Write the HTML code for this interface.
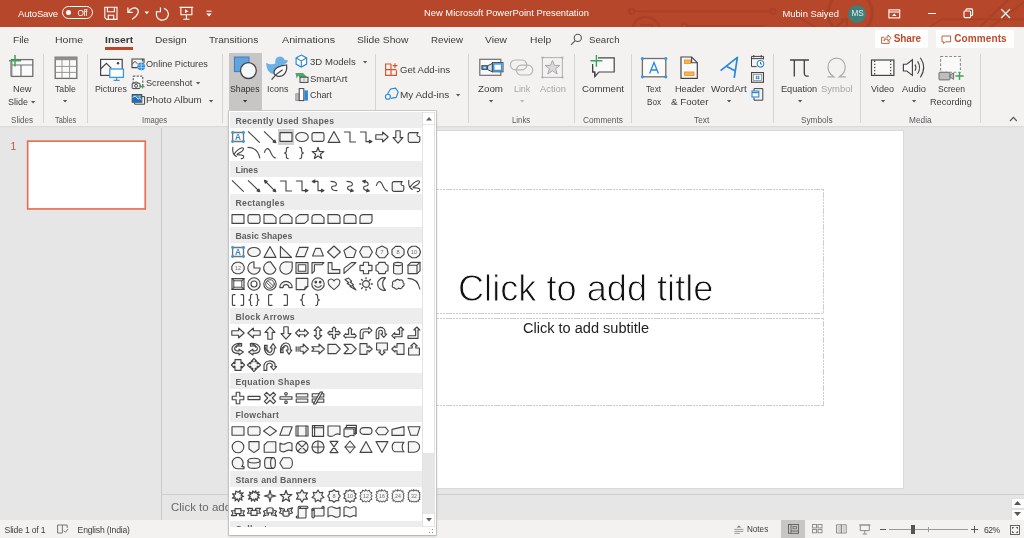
<!DOCTYPE html>
<html lang="en"><head><meta charset="utf-8"><title>New Microsoft PowerPoint Presentation - PowerPoint</title>
<style>
html,body{margin:0;padding:0;background:#E6E6E6}
body{width:1024px;height:538px;position:relative;overflow:hidden;font-family:"Liberation Sans",Arial,sans-serif}
#app{position:absolute;left:0;top:0;width:1024px;height:538px;overflow:hidden;will-change:transform}
#app div,#app span,#app svg{position:absolute;display:block}
.t{white-space:pre;margin:0;padding:0}
svg{overflow:visible}
.sh{fill:#F6F6F6;stroke:#444;stroke-width:1.12;stroke-linejoin:round;stroke-linecap:round}
.sh .n{fill:none}
.sh .k{fill:#4A4A4A}
.sh .t{stroke-width:1.3}
.sh .b{stroke:#2B88D8;fill:none}
.sh text{stroke:none;fill:#4A4A4A;font-family:"Liberation Sans",sans-serif}
</style></head><body><div id="app">
<div style="left:0px;top:0px;width:1024px;height:538px;background:#E6E6E6;"></div>
<div style="left:0px;top:0px;width:1024px;height:26.6px;background:#B7472A;"></div>
<svg style="left:600px;top:0;overflow:hidden" width="424" height="26.600" viewBox="0 0 424 26.600"><g fill="none" stroke="#A84126" stroke-width="1.800"><circle cx="31.600" cy="11.300" r="2.700"/><path d="M34.400 11.300H170.200"/><circle cx="173" cy="11.300" r="2.700"/><circle cx="46" cy="31" r="14" stroke-width="2.400"/><path d="M40 24.600h12v5" /><circle cx="84.200" cy="26" r="2.600"/><path d="M87 25.800H165.500"/><path d="M194 14.500l22 13"/><circle cx="250.200" cy="13" r="22" stroke-width="3"/><path d="M236 27l10-8M241 19.600h6v6" stroke-width="2.400"/><path d="M329 27.500l12.500-8.200H424M380 27l28-27M391 27l33-25"/></g></svg>
<div style="left:0px;top:26.6px;width:1024px;height:99.2px;background:#F3F2F1;"></div>
<div style="left:0;top:125.800px;width:1024px;height:2.600px;background:linear-gradient(#D8D8D8,#E6E6E6)"></div>
<span class="t" style="left:18.00px;top:6.70px;font-size:9.6px;line-height:13px;color:#fff;letter-spacing:-0.204px;">AutoSave</span>
<div style="left:62px;top:6.4px;width:28.600px;height:11px;border:1px solid #fff;border-radius:7px"></div>
<div style="left:65.600px;top:10.400px;width:5px;height:5px;border-radius:3px;background:#fff"></div>
<span class="t" style="left:77.40px;top:7.50px;font-size:8.2px;line-height:11px;color:#fff;letter-spacing:-0.262px;">Off</span>
<svg style="left:104px;top:6px;" width="14" height="15" viewBox="0 0 14 15"><g fill="none" stroke="#fff" stroke-width="1.1"><path d="M.8 1.2h12.2v12.2H2.6L.8 11.6z"/><path d="M3.4 1.4v4.4h7V1.4M4.3 13.2V9.3h5.4v3.9"/></g></svg>
<svg style="left:127px;top:5px;" width="16" height="16" viewBox="0 0 16 16"><g fill="none" stroke="#fff" stroke-width="1.15"><path d="M.9 2.600v4.800h4.800"/><path d="M1.200 7.200C3.400 3.400 7.400 1.600 10 3.800c2.600 2.200 1.600 6-5 10.600"/></g></svg>
<svg style="left:144px;top:11px;" width="6" height="4" viewBox="0 0 6 4"><path d="M.5.6h4.6L2.8 3.2z" fill="#fff"/></svg>
<svg style="left:155px;top:5px;" width="16" height="16" viewBox="0 0 16 16"><g fill="none" stroke="#fff" stroke-width="1.15"><path d="M5.400 2.400v4.300H.8"/><path d="M8.900 3.400A6 6 0 1 1 1.700 7"/></g></svg>
<svg style="left:179px;top:6px;" width="15" height="15" viewBox="0 0 15 15"><g fill="none" stroke="#fff" stroke-width="1.1"><path d="M.6 1.4h13.6M1.9 1.6v7.2h11V1.6M7.4 8.9v4M4.3 13.2h6.2"/></g><path d="M6 3.2l3.4 2-3.4 2z" fill="#fff"/></svg>
<svg style="left:205px;top:10px;" width="8" height="8" viewBox="0 0 8 8"><path d="M1.5 1.2h5" stroke="#fff" stroke-width="1"/><path d="M1.2 3.6h5.6L4 6.6z" fill="#fff"/></svg>
<span class="t" style="left:424.00px;top:6.10px;font-size:9.4px;line-height:13px;color:#fff;letter-spacing:-0.006px;">New Microsoft PowerPoint Presentation</span>
<span class="t" style="left:782.50px;top:6.90px;font-size:9.4px;line-height:13px;color:#fff;letter-spacing:-0.038px;">Mubin Saiyed</span>
<div style="left:848px;top:4.5px;width:18px;height:18px;border-radius:9px;background:#3F7F7A"></div>
<span class="t" style="left:851.60px;top:8.10px;font-size:8.2px;line-height:11px;color:#E4EFEE;letter-spacing:-0.250px;">MS</span>
<svg style="left:888px;top:9px;" width="13" height="10" viewBox="0 0 13 10"><g fill="none" stroke="#fff" stroke-width="1.1"><rect x=".9" y=".9" width="10.8" height="8"/><path d="M1 3h10.6"/></g><path d="M4 6.9l2.3-2.4 2.3 2.4z" fill="#fff"/></svg>
<div style="left:927.6px;top:13.2px;width:8.4px;height:1.1px;background:#fff;"></div>
<svg style="left:963px;top:8px;" width="11" height="11" viewBox="0 0 11 11"><g fill="none" stroke="#fff" stroke-width="1.1"><rect x="1" y="3" width="6.6" height="6.6" rx="1"/><path d="M3 2.9V1.9a1 1 0 0 1 1-1h4.6a1 1 0 0 1 1 1v4.6a1 1 0 0 1-1 1H7.7"/></g></svg>
<svg style="left:1000px;top:8px;" width="11" height="11" viewBox="0 0 11 11"><path d="M1.2 1.2l8.8 8.8M10 1.2L1.2 10" stroke="#fff" stroke-width="1.2" fill="none"/></svg>
<span class="t" style="left:13.00px;top:32.80px;font-size:9.7px;line-height:14px;color:#3C3C3C;letter-spacing:0.000px;transform:scaleX(1.0365);transform-origin:0 0;">File</span>
<span class="t" style="left:54.50px;top:32.80px;font-size:9.7px;line-height:14px;color:#3C3C3C;letter-spacing:0.000px;transform:scaleX(1.0860);transform-origin:0 0;">Home</span>
<span class="t" style="left:154.50px;top:32.80px;font-size:9.7px;line-height:14px;color:#3C3C3C;letter-spacing:0.000px;transform:scaleX(1.0499);transform-origin:0 0;">Design</span>
<span class="t" style="left:209.00px;top:32.80px;font-size:9.7px;line-height:14px;color:#3C3C3C;letter-spacing:0.000px;transform:scaleX(1.0472);transform-origin:0 0;">Transitions</span>
<span class="t" style="left:281.50px;top:32.80px;font-size:9.7px;line-height:14px;color:#3C3C3C;letter-spacing:0.000px;transform:scaleX(1.1066);transform-origin:0 0;">Animations</span>
<span class="t" style="left:357.00px;top:32.80px;font-size:9.7px;line-height:14px;color:#3C3C3C;letter-spacing:0.000px;transform:scaleX(1.0633);transform-origin:0 0;">Slide Show</span>
<span class="t" style="left:431.00px;top:32.80px;font-size:9.7px;line-height:14px;color:#3C3C3C;letter-spacing:0.000px;transform:scaleX(1.0061);transform-origin:0 0;">Review</span>
<span class="t" style="left:485.00px;top:32.80px;font-size:9.7px;line-height:14px;color:#3C3C3C;letter-spacing:0.000px;transform:scaleX(1.0552);transform-origin:0 0;">View</span>
<span class="t" style="left:530.00px;top:32.80px;font-size:9.7px;line-height:14px;color:#3C3C3C;letter-spacing:0.000px;transform:scaleX(1.0627);transform-origin:0 0;">Help</span>
<span class="t" style="left:104.50px;top:32.80px;font-size:9.7px;line-height:14px;color:#383838;letter-spacing:0.000px;font-weight:bold;transform:scaleX(1.0714);transform-origin:0 0;">Insert</span>
<div style="left:104.6px;top:47.1px;width:28.5px;height:2.5px;background:#BC4526;"></div>
<svg style="left:570px;top:33px;" width="13" height="13" viewBox="0 0 13 13"><g fill="none" stroke="#555" stroke-width="1.1"><circle cx="7.8" cy="4.9" r="3.6"/><path d="M5.2 7.6L1 11.9"/></g></svg>
<span class="t" style="left:588.60px;top:32.80px;font-size:9.7px;line-height:14px;color:#3C3C3C;letter-spacing:0.000px;transform:scaleX(0.9956);transform-origin:0 0;">Search</span>
<div style="left:875.300px;top:29.800px;width:52.700px;height:18px;background:#fff;border-radius:1.5px"></div>
<svg style="left:880px;top:33.4px;" width="12" height="12" viewBox="0 0 12 12"><g fill="none" stroke="#C4573A" stroke-width=".95"><path d="M4.4 4.2H1.6v6.2h7.6V7.8"/><path d="M3.9 7.9C4.3 5.2 6 4 8 4V2l3 3.2-3 3.1V6.2C6.3 6.1 4.9 6.600 3.9 7.9z"/></g></svg>
<span class="t" style="left:893.80px;top:32.40px;font-size:10px;line-height:14px;color:#BE4B2C;letter-spacing:-0.159px;font-weight:bold;">Share</span>
<div style="left:935.800px;top:29.800px;width:78px;height:18px;background:#fff;border-radius:1.5px"></div>
<svg style="left:941px;top:34.6px;" width="11" height="11" viewBox="0 0 11 11"><path d="M1 1h8.600v5.800H4.400L2.600 8.600V6.800H1z" fill="none" stroke="#C4573A" stroke-width=".95"/></svg>
<span class="t" style="left:954.30px;top:32.40px;font-size:10px;line-height:14px;color:#BE4B2C;letter-spacing:0.091px;font-weight:bold;">Comments</span>
<div style="left:43.25px;top:54px;width:1px;height:69px;background:#D6D4D2;"></div>
<div style="left:87px;top:54px;width:1px;height:69px;background:#D6D4D2;"></div>
<div style="left:221.5px;top:54px;width:1px;height:69px;background:#D6D4D2;"></div>
<div style="left:375px;top:54px;width:1px;height:69px;background:#D6D4D2;"></div>
<div style="left:468.25px;top:54px;width:1px;height:69px;background:#D6D4D2;"></div>
<div style="left:573.75px;top:54px;width:1px;height:69px;background:#D6D4D2;"></div>
<div style="left:631.25px;top:54px;width:1px;height:69px;background:#D6D4D2;"></div>
<div style="left:772.9px;top:54px;width:1px;height:69px;background:#D6D4D2;"></div>
<div style="left:859.9px;top:54px;width:1px;height:69px;background:#D6D4D2;"></div>
<div style="left:979.9px;top:54px;width:1px;height:69px;background:#D6D4D2;"></div>
<span class="t" style="left:10.60px;top:113.80px;font-size:8.5px;line-height:12px;color:#5A5A5A;letter-spacing:0.000px;transform:scaleX(0.9503);transform-origin:0 0;">Slides</span>
<span class="t" style="left:54.60px;top:113.80px;font-size:8.5px;line-height:12px;color:#5A5A5A;letter-spacing:0.000px;transform:scaleX(0.8628);transform-origin:0 0;">Tables</span>
<span class="t" style="left:141.80px;top:113.80px;font-size:8.5px;line-height:12px;color:#5A5A5A;letter-spacing:0.000px;transform:scaleX(0.9041);transform-origin:0 0;">Images</span>
<span class="t" style="left:511.80px;top:113.80px;font-size:8.5px;line-height:12px;color:#5A5A5A;letter-spacing:0.000px;transform:scaleX(0.9172);transform-origin:0 0;">Links</span>
<span class="t" style="left:582.60px;top:113.80px;font-size:8.5px;line-height:12px;color:#5A5A5A;letter-spacing:0.000px;transform:scaleX(0.9685);transform-origin:0 0;">Comments</span>
<span class="t" style="left:694.20px;top:113.80px;font-size:8.5px;line-height:12px;color:#5A5A5A;letter-spacing:0.000px;transform:scaleX(0.9879);transform-origin:0 0;">Text</span>
<span class="t" style="left:800.60px;top:113.80px;font-size:8.5px;line-height:12px;color:#5A5A5A;letter-spacing:0.000px;transform:scaleX(0.9695);transform-origin:0 0;">Symbols</span>
<span class="t" style="left:909.00px;top:113.80px;font-size:8.5px;line-height:12px;color:#5A5A5A;letter-spacing:0.000px;transform:scaleX(0.9762);transform-origin:0 0;">Media</span>
<svg style="left:1009px;top:116px;" width="9" height="6" viewBox="0 0 9 6"><path d="M1 5l3.4-3.6L7.800 5" fill="none" stroke="#555" stroke-width="1.15"/></svg>
<span class="t" style="left:12.60px;top:82.80px;font-size:9.3px;line-height:13px;color:#3C3C3C;letter-spacing:0.000px;transform:scaleX(0.9890);transform-origin:0 0;">New</span>
<span class="t" style="left:8.00px;top:95.80px;font-size:9.3px;line-height:13px;color:#3C3C3C;letter-spacing:0.000px;transform:scaleX(0.9671);transform-origin:0 0;">Slide</span>
<svg style="left:31.1px;top:101.0px;" width="4.2" height="2.4" viewBox="0 0 4.2 2.4"><path d="M0 0h4.200L2.100 2.400z" fill="#555"/></svg>
<span class="t" style="left:55.00px;top:82.80px;font-size:9.3px;line-height:13px;color:#3C3C3C;letter-spacing:0.000px;transform:scaleX(0.9355);transform-origin:0 0;">Table</span>
<svg style="left:63.4px;top:100.39999999999999px;" width="4.2" height="2.4" viewBox="0 0 4.2 2.4"><path d="M0 0h4.200L2.100 2.400z" fill="#555"/></svg>
<span class="t" style="left:95.00px;top:82.80px;font-size:9.3px;line-height:13px;color:#3C3C3C;letter-spacing:0.000px;transform:scaleX(0.9466);transform-origin:0 0;">Pictures</span>
<span class="t" style="left:146.20px;top:58.20px;font-size:9.3px;line-height:13px;color:#3C3C3C;letter-spacing:0.000px;transform:scaleX(0.9800);transform-origin:0 0;">Online Pictures</span>
<span class="t" style="left:146.20px;top:76.50px;font-size:9.3px;line-height:13px;color:#3C3C3C;letter-spacing:0.000px;transform:scaleX(0.9842);transform-origin:0 0;">Screenshot</span>
<svg style="left:195.5px;top:81.6px;" width="4.2" height="2.4" viewBox="0 0 4.2 2.4"><path d="M0 0h4.200L2.100 2.400z" fill="#555"/></svg>
<span class="t" style="left:146.20px;top:94.30px;font-size:9.3px;line-height:13px;color:#3C3C3C;letter-spacing:0.000px;transform:scaleX(1.0581);transform-origin:0 0;">Photo Album</span>
<svg style="left:209.1px;top:100.0px;" width="4.2" height="2.4" viewBox="0 0 4.2 2.4"><path d="M0 0h4.200L2.100 2.400z" fill="#555"/></svg>
<div style="left:229px;top:53px;width:33px;height:58px;background:#C8C6C4;"></div>
<span class="t" style="left:230.40px;top:82.80px;font-size:9.3px;line-height:13px;color:#333;letter-spacing:0.000px;transform:scaleX(0.9384);transform-origin:0 0;">Shapes</span>
<svg style="left:243.4px;top:100.39999999999999px;" width="4.2" height="2.4" viewBox="0 0 4.2 2.4"><path d="M0 0h4.200L2.100 2.400z" fill="#333"/></svg>
<span class="t" style="left:266.80px;top:82.80px;font-size:9.3px;line-height:13px;color:#3C3C3C;letter-spacing:0.000px;transform:scaleX(0.9627);transform-origin:0 0;">Icons</span>
<span class="t" style="left:310.00px;top:56.20px;font-size:9.3px;line-height:13px;color:#3C3C3C;letter-spacing:0.000px;transform:scaleX(1.0303);transform-origin:0 0;">3D Models</span>
<svg style="left:362.9px;top:60.8px;" width="4.2" height="2.4" viewBox="0 0 4.2 2.4"><path d="M0 0h4.200L2.100 2.400z" fill="#555"/></svg>
<span class="t" style="left:310.00px;top:72.70px;font-size:9.3px;line-height:13px;color:#3C3C3C;letter-spacing:0.000px;transform:scaleX(1.0222);transform-origin:0 0;">SmartArt</span>
<span class="t" style="left:310.00px;top:88.50px;font-size:9.3px;line-height:13px;color:#3C3C3C;letter-spacing:0.000px;transform:scaleX(0.9586);transform-origin:0 0;">Chart</span>
<span class="t" style="left:399.60px;top:63.90px;font-size:9.3px;line-height:13px;color:#3C3C3C;letter-spacing:0.000px;transform:scaleX(1.0289);transform-origin:0 0;">Get Add-ins</span>
<span class="t" style="left:399.60px;top:88.90px;font-size:9.3px;line-height:13px;color:#3C3C3C;letter-spacing:0.000px;transform:scaleX(1.0695);transform-origin:0 0;">My Add-ins</span>
<svg style="left:455.5px;top:93.8px;" width="4.2" height="2.4" viewBox="0 0 4.2 2.4"><path d="M0 0h4.200L2.100 2.400z" fill="#555"/></svg>
<span class="t" style="left:478.00px;top:82.80px;font-size:9.3px;line-height:13px;color:#3C3C3C;letter-spacing:0.000px;transform:scaleX(1.0516);transform-origin:0 0;">Zoom</span>
<svg style="left:488.5px;top:100.39999999999999px;" width="4.2" height="2.4" viewBox="0 0 4.2 2.4"><path d="M0 0h4.200L2.100 2.400z" fill="#555"/></svg>
<span class="t" style="left:513.80px;top:82.80px;font-size:9.3px;line-height:13px;color:#A6A6A6;letter-spacing:0.000px;transform:scaleX(0.9496);transform-origin:0 0;">Link</span>
<svg style="left:519.6999999999999px;top:100.39999999999999px;" width="4.2" height="2.4" viewBox="0 0 4.2 2.4"><path d="M0 0h4.200L2.100 2.400z" fill="#B8B8B8"/></svg>
<span class="t" style="left:539.60px;top:82.80px;font-size:9.3px;line-height:13px;color:#A6A6A6;letter-spacing:0.000px;transform:scaleX(1.0059);transform-origin:0 0;">Action</span>
<span class="t" style="left:581.80px;top:82.80px;font-size:9.3px;line-height:13px;color:#3C3C3C;letter-spacing:0.000px;transform:scaleX(1.0419);transform-origin:0 0;">Comment</span>
<span class="t" style="left:646.40px;top:82.80px;font-size:9.3px;line-height:13px;color:#3C3C3C;letter-spacing:0.000px;transform:scaleX(0.8795);transform-origin:0 0;">Text</span>
<span class="t" style="left:647.00px;top:95.80px;font-size:9.3px;line-height:13px;color:#3C3C3C;letter-spacing:0.000px;transform:scaleX(0.8736);transform-origin:0 0;">Box</span>
<span class="t" style="left:674.60px;top:82.80px;font-size:9.3px;line-height:13px;color:#3C3C3C;letter-spacing:0.000px;transform:scaleX(0.9835);transform-origin:0 0;">Header</span>
<span class="t" style="left:670.80px;top:95.80px;font-size:9.3px;line-height:13px;color:#3C3C3C;letter-spacing:0.000px;transform:scaleX(1.0486);transform-origin:0 0;">&amp; Footer</span>
<span class="t" style="left:711.00px;top:82.80px;font-size:9.3px;line-height:13px;color:#3C3C3C;letter-spacing:0.000px;transform:scaleX(1.0549);transform-origin:0 0;">WordArt</span>
<svg style="left:726.9px;top:100.39999999999999px;" width="4.2" height="2.4" viewBox="0 0 4.2 2.4"><path d="M0 0h4.200L2.100 2.400z" fill="#555"/></svg>
<span class="t" style="left:781.40px;top:82.80px;font-size:9.3px;line-height:13px;color:#3C3C3C;letter-spacing:0.000px;transform:scaleX(0.9860);transform-origin:0 0;">Equation</span>
<svg style="left:797.6999999999999px;top:100.39999999999999px;" width="4.2" height="2.4" viewBox="0 0 4.2 2.4"><path d="M0 0h4.200L2.100 2.400z" fill="#555"/></svg>
<span class="t" style="left:821.20px;top:82.80px;font-size:9.3px;line-height:13px;color:#A6A6A6;letter-spacing:0.000px;transform:scaleX(1.0190);transform-origin:0 0;">Symbol</span>
<span class="t" style="left:871.00px;top:82.80px;font-size:9.3px;line-height:13px;color:#3C3C3C;letter-spacing:0.000px;transform:scaleX(0.9738);transform-origin:0 0;">Video</span>
<svg style="left:880.5px;top:100.39999999999999px;" width="4.2" height="2.4" viewBox="0 0 4.2 2.4"><path d="M0 0h4.200L2.100 2.400z" fill="#555"/></svg>
<span class="t" style="left:901.60px;top:82.80px;font-size:9.3px;line-height:13px;color:#3C3C3C;letter-spacing:0.000px;transform:scaleX(1.0090);transform-origin:0 0;">Audio</span>
<svg style="left:911.5px;top:100.39999999999999px;" width="4.2" height="2.4" viewBox="0 0 4.2 2.4"><path d="M0 0h4.200L2.100 2.400z" fill="#555"/></svg>
<span class="t" style="left:938.00px;top:82.80px;font-size:9.3px;line-height:13px;color:#3C3C3C;letter-spacing:0.000px;transform:scaleX(0.9163);transform-origin:0 0;">Screen</span>
<span class="t" style="left:930.40px;top:95.80px;font-size:9.3px;line-height:13px;color:#3C3C3C;letter-spacing:0.000px;transform:scaleX(0.9861);transform-origin:0 0;">Recording</span>
<svg style="left:8px;top:54px;" width="27" height="25" viewBox="0 0 27 25"><rect x="3.4" y="5.600" width="21.400" height="16.800" fill="#FAFAFA" stroke="#6E6E6E" stroke-width="1.3"/><path d="M3.400 11h21.400M13 11v11.400" stroke="#6E6E6E" stroke-width="1.2" fill="none"/><rect x="2.400" y="8" width="2" height="14" fill="#8A8A8A"/><path d="M1 6.800h12.200M7 1v11.600" stroke="#3DA35D" stroke-width="1.5" fill="none"/></svg>
<svg style="left:54px;top:56px;" width="24" height="24" viewBox="0 0 24 24"><rect x="1.200" y="1.200" width="21.600" height="21.200" fill="#FAFAFA" stroke="#6E6E6E" stroke-width="1.3"/><rect x="1.200" y="1.200" width="21.600" height="3" fill="#8E8E8E"/><path d="M8 4v18.400M15.600 4v18.400M1.200 10.400h21.600M1.200 16.400h21.600" stroke="#8C8C8C" stroke-width=".9" fill="none"/></svg>
<svg style="left:99px;top:57px;" width="27" height="25" viewBox="0 0 27 25"><rect x="1.600" y="2.400" width="21.600" height="16" fill="#FAFAFA" stroke="#444" stroke-width="1.2"/><path d="M1.600 12l5.800-5.600 5 5" stroke="#444" stroke-width="1.200" fill="none"/><circle cx="19" cy="6.300" r="1.200" fill="#444"/><rect x="10.800" y="12" width="13.600" height="8.400" fill="#fff" stroke="#3A96DD" stroke-width="1.300"/><path d="M17.600 20.400v2.600M14.600 23.300h6" stroke="#3A96DD" stroke-width="1.200" fill="none"/></svg>
<svg style="left:131px;top:58px;" width="15" height="13" viewBox="0 0 15 13"><path d="M8 9.600H1V1h12v4" fill="none" stroke="#444" stroke-width="1.100"/><path d="M1 6.400l3-3 2.400 2.400" fill="none" stroke="#444" stroke-width="1"/><path d="M11.400 1v2.400" stroke="#444" stroke-width="1"/><circle cx="10.300" cy="8.300" r="3.900" fill="#2B88D8"/><path d="M10.300 4.400v7.800M6.600 7h7.400M6.600 9.600h7.400" stroke="#BFE0F8" stroke-width=".7" fill="none"/></svg>
<svg style="left:131px;top:75px;" width="15" height="15" viewBox="0 0 15 15"><rect x="2.200" y="1.100" width="9.600" height="10" fill="#FAFAFA" stroke="#444" stroke-width="1" stroke-dasharray="2.200 1.300"/><rect x="1.200" y="8.200" width="7.800" height="5.400" rx=".8" fill="#F3F2F1" stroke="#444" stroke-width="1"/><path d="M3.400 8.200l.6-1.100h2.200l.6 1.100" fill="#F3F2F1" stroke="#444" stroke-width=".9"/><circle cx="5.100" cy="10.900" r="1.500" fill="none" stroke="#444" stroke-width=".9"/><path d="M9.600 11.600h4M11.600 9.600v4" stroke="#3DA35D" stroke-width="1.100"/></svg>
<svg style="left:131px;top:93px;" width="15" height="12" viewBox="0 0 15 12"><path d="M3.600 9.400v1.800h10V3.600H11" fill="none" stroke="#444" stroke-width="1"/><rect x="1.200" y="1.600" width="9.600" height="7.600" fill="#3A96DD" stroke="#444" stroke-width="1"/><path d="M1.600 5.200l2.600-1.800 3 3 1.400-1 2 1.600v2H1.600z" fill="#1F6FBF"/><path d="M1.600 4.400l2.600-1.400 3 3.200 1.400-1 2 1.600" fill="none" stroke="#fff" stroke-width=".7"/><circle cx="8.400" cy="3.400" r=".9" fill="#F5A33B"/></svg>
<svg style="left:233px;top:55px;" width="26" height="26" viewBox="0 0 26 26"><rect x="1.400" y="2" width="14.600" height="14.600" fill="#62A3DB" stroke="#3B7CC9" stroke-width="1"/><circle cx="15.400" cy="15.600" r="7.900" fill="#F5F8F9" stroke="#444" stroke-width="1.300"/></svg>
<svg style="left:265px;top:55px;" width="25" height="27" viewBox="0 0 25 27"><path d="M1.200 7.800C4 9.600 7.600 9.800 10.400 8.600C9.600 5 11.400 1.600 14.800 1.500C17.400 1.500 19 3 19.400 4.800L23 5.600C22.400 8 20.600 9 18.600 9.200C18.600 14 15 19 9 19C4 19 1.200 14 1.200 7.800z" fill="#6CB0E7"/><path d="M9.400 19.400C7.400 13.600 14 10.600 21.600 10c.8 6.600-2.600 12.600-9.400 11.200z" fill="#FAFAFA" stroke="#444" stroke-width="1.200"/><path d="M6.600 24.600C9.600 20.600 13 17.600 17.600 14.800" fill="none" stroke="#444" stroke-width="1.200"/></svg>
<svg style="left:295px;top:54px;" width="13" height="14" viewBox="0 0 13 14"><path d="M6.300 1.100l5.300 2.800v6.200l-5.300 3-5.200-3V3.900z" fill="#fff" stroke="#2B88D8" stroke-width="1.150"/><path d="M1.100 3.900l5.200 3 5.300-3M6.300 6.900v6.200" fill="none" stroke="#2B88D8" stroke-width="1.100"/></svg>
<svg style="left:295px;top:72px;" width="14" height="12" viewBox="0 0 14 12"><path d="M.6 1h7.400l4.200 4.200H4.600L3 3.600 1.600 5z" fill="#4CA86B"/><path d="M.6 1l2.600 2.600-1.600 3z" fill="#4CA86B"/><rect x="5" y="5.200" width="8" height="5.200" fill="#E9E9E9" stroke="#444" stroke-width="1"/><path d="M9 6.400v2.800" stroke="#888" stroke-width=".8"/></svg>
<svg style="left:295px;top:87px;" width="14" height="15" viewBox="0 0 14 15"><rect x=".8" y="6.800" width="3.400" height="6.800" fill="#BDBDBD" stroke="#8A8A8A" stroke-width=".8"/><rect x="4.200" y="1.600" width="4.600" height="12" fill="#fff" stroke="#444" stroke-width="1"/><rect x="9.300" y="3.400" width="3.600" height="10.200" fill="#2B88D8"/></svg>
<svg style="left:384px;top:62px;" width="14" height="15" viewBox="0 0 14 15"><path d="M7.200 2H1.600v11.400h10.800V8.400M1.600 7.600h10.800M7 2v11.400" fill="none" stroke="#D8532E" stroke-width="1.150"/><path d="M8.600 3.600h4.800M11 1.200V6" stroke="#D8532E" stroke-width="1.100"/></svg>
<svg style="left:384px;top:87px;" width="15" height="13" viewBox="0 0 15 13"><path d="M3.600 6.800l3-4.800 5-.8 2.600 3.800-2 5.400-5.200 1" fill="none" stroke="#2B88D8" stroke-width="1.150"/><circle cx="3.900" cy="9.700" r="2.500" fill="none" stroke="#2B88D8" stroke-width="1.150"/></svg>
<svg style="left:478px;top:57px;" width="27" height="21" viewBox="0 0 27 21"><rect x="1.800" y="2.300" width="21" height="16" fill="#FAFAFA" stroke="#6E6E6E" stroke-width="1.200"/><path d="M9.600 8.800l4.800-2.400v8.400l-4.800-2.200z" fill="#E0E0E0" stroke="#444" stroke-width="1"/><rect x="3.800" y="8.600" width="5.600" height="3.900" fill="#2B88D8" stroke="#444" stroke-width=".8"/><rect x="5.400" y="9.700" width="2.400" height="1.700" fill="#BFE0F8"/><rect x="14.400" y="5.600" width="10.600" height="9.200" fill="#fff" stroke="#444" stroke-width="1"/><rect x="15.700" y="6.900" width="8" height="6.600" fill="#fff" stroke="#2B9AF3" stroke-width="1.500"/></svg>
<svg style="left:509px;top:58px;" width="25" height="19" viewBox="0 0 25 19"><rect x="1.400" y="2" width="16.400" height="9.800" rx="4.900" fill="none" stroke="#B4B4B4" stroke-width="1.200"/><rect x="7.400" y="7.200" width="16.400" height="9.800" rx="4.900" fill="none" stroke="#B4B4B4" stroke-width="1.200"/></svg>
<svg style="left:540px;top:55px;" width="25" height="25" viewBox="0 0 25 25"><rect x="2.400" y="2.600" width="20" height="19.800" fill="none" stroke="#B0B0B0" stroke-width="1"/><path d="M12.500 5.400l2.100 5h5.200l-4.200 3.300 1.600 5.300-4.700-3.200-4.700 3.200 1.600-5.300-4.200-3.300h5.200z" fill="#DADADA" stroke="#A8A8A8" stroke-width="1"/><g fill="#B0B0B0"><rect x="1.400" y="1.600" width="2" height="2"/><rect x="21.400" y="1.600" width="2" height="2"/><rect x="1.400" y="21.400" width="2" height="2"/><rect x="21.400" y="21.400" width="2" height="2"/></g></svg>
<svg style="left:589px;top:54px;" width="27" height="25" viewBox="0 0 27 25"><path d="M3.600 3.800h21.600v14.200H9.800L5.800 22.600V18H3.600z" fill="#FAFAFA" stroke="#444" stroke-width="1.200"/><rect x="0" y="2" width="9" height="10" fill="#F3F2F1"/><path d="M3.600 10v8h2.200v4.600" fill="none" stroke="#444" stroke-width="1.200"/><path d="M1.400 6.800h12M7.400 1v11.700" stroke="#3DA35D" stroke-width="1.400"/></svg>
<svg style="left:640px;top:56px;" width="28" height="23" viewBox="0 0 28 23"><rect x="2.400" y="2.500" width="23.400" height="18.300" fill="#FAFAFA" stroke="#6E6E6E" stroke-width="1.300"/><g fill="#3A96DD"><circle cx="2.400" cy="2.500" r="1.600"/><circle cx="25.800" cy="2.500" r="1.600"/><circle cx="2.400" cy="20.800" r="1.600"/><circle cx="25.800" cy="20.800" r="1.600"/></g><path d="M9.600 17.400l4.400-11 4.400 11M11 14h6.200" fill="none" stroke="#2B88D8" stroke-width="1.300"/></svg>
<svg style="left:679px;top:55px;" width="21" height="25" viewBox="0 0 21 25"><path d="M2 2h10.600l5.700 5.700v15.700H2z" fill="#FAFAFA" stroke="#444" stroke-width="1.200"/><path d="M12.600 2v5.700h5.700" fill="none" stroke="#444" stroke-width="1.100"/><rect x="5.400" y="5" width="6.200" height="3.400" fill="#F7B750" stroke="#E8912D" stroke-width=".9"/><rect x="5.400" y="17" width="9.600" height="3.400" fill="#F7B750" stroke="#E8912D" stroke-width=".9"/></svg>
<svg style="left:719px;top:55px;" width="22" height="25" viewBox="0 0 22 25"><path d="M1.600 15.700L18.400 2.300 15.200 22.900M7.400 11.300l9.400 5" fill="none" stroke="#2B88D8" stroke-width="1.700" stroke-linejoin="round"/></svg>
<svg style="left:750px;top:54px;" width="15" height="14" viewBox="0 0 15 14"><path d="M6.600 12.600H1.500V2.400h12v3" fill="none" stroke="#444" stroke-width="1"/><path d="M1.500 4.600h12M3.800 1v2.400M11.200 1v2.400" stroke="#444" stroke-width="1"/><circle cx="10.500" cy="9.800" r="3.300" fill="#fff" stroke="#2B88D8" stroke-width="1.100"/><path d="M10.500 7.900v2.100h1.600" fill="none" stroke="#444" stroke-width=".8"/></svg>
<svg style="left:750px;top:71px;" width="15" height="13" viewBox="0 0 15 13"><rect x="1.500" y="1.500" width="12" height="9.800" fill="#D9D9D9" stroke="#444" stroke-width="1"/><rect x="3.500" y="3.400" width="8" height="6" fill="#fff" stroke="#888" stroke-width=".7"/><path d="M6.600 4.600v3.800M8.600 4.600v3.800M5.600 5.800h4M5.600 7.400h4" stroke="#2B88D8" stroke-width=".8"/></svg>
<svg style="left:750px;top:87px;" width="15" height="15" viewBox="0 0 15 15"><path d="M4 3.800V1.600h8.800v11.600H4V10.400" fill="none" stroke="#444" stroke-width="1"/><rect x="2" y="4" width="6.800" height="6" fill="#fff" stroke="#2B88D8" stroke-width="1.100"/><path d="M2 5.600h6.800" stroke="#2B88D8" stroke-width="1.200"/></svg>
<svg style="left:788px;top:57px;" width="23" height="22" viewBox="0 0 23 22"><path d="M2 3h19M6.300 3v16.400M16.300 3v13.200c0 2.400 1.500 3.300 4.400 2.900" fill="none" stroke="#444" stroke-width="1.350"/></svg>
<svg style="left:825px;top:56px;" width="23" height="23" viewBox="0 0 23 23"><path d="M2.400 20.800h6.400C4.800 18.200 3 15 3 11.200 3 5.800 6.600 2.200 11.600 2.200s8.600 3.600 8.600 9c0 3.800-1.800 7-5.800 9.600h6.400" fill="none" stroke="#ABABAB" stroke-width="1.200"/></svg>
<svg style="left:870px;top:58px;" width="25" height="19" viewBox="0 0 25 19"><rect x="1.500" y="2" width="22.400" height="15.400" fill="#FAFAFA" stroke="#444" stroke-width="1.200"/><path d="M4.700 2.600v14.400M20.700 2.600v14.400" stroke="#444" stroke-width="1.200" stroke-dasharray="1.400 1.700"/></svg>
<svg style="left:902px;top:56px;" width="24" height="23" viewBox="0 0 24 23"><path d="M1.400 8.200h3.400l5.600-4.400v15.600l-5.600-4.400H1.400z" fill="#FAFAFA" stroke="#444" stroke-width="1.150"/><path d="M13 8.400q1.800 3.200 0 6.400M15.600 5.400q4 6.200 0 12.400M18.400 1.800q6.600 9.800 0 19.600" fill="none" stroke="#444" stroke-width="1.100"/></svg>
<svg style="left:938px;top:55px;" width="28" height="27" viewBox="0 0 28 27"><rect x="2.600" y="1.500" width="19.800" height="15.800" fill="#FAFAFA" stroke="#8A8A8A" stroke-width="1.100" stroke-dasharray="2.600 1.800"/><rect x="1" y="17.300" width="11" height="7.600" rx=".8" fill="#BEBEBE" stroke="#6E6E6E" stroke-width="1"/><path d="M12 20.100l3.600-2.200v6.400L12 22.100z" fill="#BEBEBE" stroke="#6E6E6E" stroke-width="1"/><path d="M17.400 21h8.200M21.500 16.900v8.200" stroke="#3DA35D" stroke-width="1.400"/></svg>
<span class="t" style="left:10.40px;top:138.70px;font-size:10.4px;line-height:15px;color:#D35230;letter-spacing:-1.784px;">1</span>
<svg style="left:26px;top:139px;" width="122" height="72" viewBox="0 0 122 72"><rect x="1.650" y="2.150" width="117.600" height="67.800" fill="#fff" stroke="#E8714F" stroke-width="1.700"/></svg>
<div style="left:161px;top:127.5px;width:1px;height:392.5px;background:#C9C9C9;"></div>
<div style="left:268px;top:131px;width:635px;height:357px;background:#fff;box-shadow:0 0 0 .8px #D6D6D6"></div>
<div style="left:347px;top:189px;width:477px;height:1px;background:repeating-linear-gradient(90deg,#CDCDCD 0 2.400px,transparent 2.400px 3.200px)"></div>
<div style="left:347px;top:313px;width:477px;height:1px;background:repeating-linear-gradient(90deg,#CDCDCD 0 2.400px,transparent 2.400px 3.200px)"></div>
<div style="left:347px;top:189px;width:1px;height:125px;background:repeating-linear-gradient(180deg,#CDCDCD 0 2.400px,transparent 2.400px 3.200px)"></div>
<div style="left:823.400px;top:189px;width:1px;height:125px;background:repeating-linear-gradient(180deg,#CDCDCD 0 2.400px,transparent 2.400px 3.200px)"></div>
<div style="left:347px;top:318px;width:477px;height:1px;background:repeating-linear-gradient(90deg,#CDCDCD 0 2.400px,transparent 2.400px 3.200px)"></div>
<div style="left:347px;top:404.5px;width:477px;height:1px;background:repeating-linear-gradient(90deg,#CDCDCD 0 2.400px,transparent 2.400px 3.200px)"></div>
<div style="left:347px;top:318px;width:1px;height:87.5px;background:repeating-linear-gradient(180deg,#CDCDCD 0 2.400px,transparent 2.400px 3.200px)"></div>
<div style="left:823.400px;top:318px;width:1px;height:87.5px;background:repeating-linear-gradient(180deg,#CDCDCD 0 2.400px,transparent 2.400px 3.200px)"></div>
<span class="t" style="left:458.20px;top:261.60px;font-size:37.4px;line-height:52px;color:#111;letter-spacing:0.000px;-webkit-text-stroke:.95px #fff;transform:scaleX(0.9675);transform-origin:0 0;">Click to add title</span>
<span class="t" style="left:523.20px;top:317.60px;font-size:14.9px;line-height:21px;color:#222;letter-spacing:0.000px;transform:scaleX(0.9768);transform-origin:0 0;">Click to add subtitle</span>
<div style="left:162px;top:493.5px;width:862px;height:1px;background:#CFCFCF;"></div>
<span class="t" style="left:170.70px;top:498.70px;font-size:11.6px;line-height:16px;color:#686868;letter-spacing:0.000px;transform:scaleX(0.9923);transform-origin:0 0;">Click to add notes</span>
<div style="left:1011px;top:498px;width:11.500px;height:9px;background:#fff;border:.5px solid #E0E0E0"></div>
<div style="left:1011px;top:509px;width:11.500px;height:9.500px;background:#fff;border:.5px solid #E0E0E0"></div>
<svg style="left:1013.5px;top:500.5px;" width="7" height="4" viewBox="0 0 7 4"><path d="M0 4h7L3.500 0z" fill="#555"/></svg>
<svg style="left:1013.5px;top:512px;" width="7" height="4" viewBox="0 0 7 4"><path d="M0 0h7L3.500 4z" fill="#555"/></svg>
<div style="left:0px;top:520.4px;width:1024px;height:17.6px;background:#F3F2F1;"></div>
<span class="t" style="left:4.60px;top:523.60px;font-size:8.6px;line-height:12px;color:#3C3C3C;letter-spacing:-0.186px;">Slide 1 of 1</span>
<svg style="left:57px;top:524px;" width="12" height="10" viewBox="0 0 12 10"><g fill="none" stroke="#666" stroke-width=".9"><path d="M5.4 1v8M.6 1h4.8M.6 1v8h4.800"/><path d="M5.400 1h4.800v3"/><path d="M6.800 6.600l1.600 1.700 2.800-3.400"/></g></svg>
<span class="t" style="left:77.60px;top:523.60px;font-size:8.6px;line-height:12px;color:#3C3C3C;letter-spacing:-0.185px;">English (India)</span>
<svg style="left:733.5px;top:523.6px;" width="10" height="10" viewBox="0 0 10 10"><g stroke="#8C8C8C" stroke-width=".85" fill="none"><path d="M.4 5.400h9M.4 7.400h9M.4 9.400h5.400"/></g><path d="M2.600 3.600h4.600L4.900 1.400z" fill="#777"/></svg>
<span class="t" style="left:746.80px;top:523.30px;font-size:8.8px;line-height:12px;color:#3C3C3C;letter-spacing:0.000px;transform:scaleX(0.9222);transform-origin:0 0;">Notes</span>
<div style="left:781.2px;top:520.4px;width:23.6px;height:17.6px;background:#C8C6C4;"></div>
<svg style="left:787.5px;top:523.5px;" width="11" height="10" viewBox="0 0 11 10"><g fill="none" stroke="#5E5E5E" stroke-width=".9"><rect x=".5" y=".5" width="10" height="8.800"/><path d="M3 .5v8.800M3 7h7.400"/><rect x="5" y="2.400" width="3.600" height="2.400" stroke-width=".7"/></g></svg>
<svg style="left:811.5px;top:524px;" width="11" height="10" viewBox="0 0 11 10"><g fill="none" stroke="#858585" stroke-width=".9"><rect x=".5" y=".5" width="4" height="3.400"/><rect x="6" y=".5" width="4" height="3.400"/><rect x=".5" y="5.400" width="4" height="3.400"/><rect x="6" y="5.400" width="4" height="3.400"/></g></svg>
<svg style="left:835.5px;top:524px;" width="11" height="10" viewBox="0 0 11 10"><g fill="none" stroke="#858585" stroke-width=".9"><path d="M5.400 1v8.400M.5 .8h4.900v8.200H.5zM5.400 .8h4.900v8.200H5.400z"/><path d="M1.600 3h2.600M1.600 5h2.600M1.600 7h2.600M6.600 3h2.600M6.600 5h2.600M6.600 7h2.600" stroke-width=".6"/></g></svg>
<svg style="left:859px;top:523.5px;" width="12" height="11" viewBox="0 0 12 11"><g fill="none" stroke="#808080" stroke-width=".9"><path d="M.3 1h11" stroke-width="1.300"/><path d="M1.300 1.200v5.400h9V1.200M5.800 6.700v3M3.600 10h4.400"/></g></svg>
<div style="left:879.8px;top:528.6px;width:6.2px;height:1.4px;background:#555;"></div>
<div style="left:889px;top:529px;width:78.5px;height:1px;background:#9A9A9A;"></div>
<div style="left:928.2px;top:526.6px;width:1px;height:5.6px;background:#9A9A9A;"></div>
<div style="left:911.4px;top:524.6px;width:3.8px;height:9px;background:#555;"></div>
<div style="left:970.6px;top:528.7px;width:7px;height:1.3px;background:#555;"></div>
<div style="left:973.5px;top:525.8px;width:1.3px;height:7px;background:#555;"></div>
<span class="t" style="left:984.00px;top:523.60px;font-size:8.6px;line-height:12px;color:#3C3C3C;letter-spacing:-0.471px;">62%</span>
<svg style="left:1010px;top:524.5px;" width="10" height="10" viewBox="0 0 10 10"><g fill="none" stroke="#555" stroke-width=".9"><rect x=".5" y=".5" width="9" height="9"/></g><path d="M2 2h2.200L2 4.200zM8 2v2.200L5.800 2zM2 8V5.800L4.200 8zM8 8H5.800L8 5.800z" fill="#555"/></svg>
<div style="left:229px;top:111px;width:207px;height:424px;background:#fff;box-shadow:0 1px 3px rgba(0,0,0,.2),0 0 0 1px #D2D2D2"></div>
<div style="left:230px;top:112px;width:192px;height:414.5px;overflow:hidden">
<div style="left:0;top:0px;width:192px;height:16.2px;background:#EDEDED"></div>
<span class="t" style="left:5.40px;top:2.60px;font-size:8.7px;line-height:12px;color:#5E5E5E;letter-spacing:0.284px;font-weight:bold;">Recently Used Shapes</span>
<div style="left:0;top:49px;width:192px;height:16.2px;background:#EDEDED"></div>
<span class="t" style="left:5.40px;top:51.70px;font-size:8.7px;line-height:12px;color:#5E5E5E;letter-spacing:-0.025px;font-weight:bold;">Lines</span>
<div style="left:0;top:82px;width:192px;height:16.2px;background:#EDEDED"></div>
<span class="t" style="left:5.40px;top:84.70px;font-size:8.7px;line-height:12px;color:#5E5E5E;letter-spacing:0.318px;font-weight:bold;">Rectangles</span>
<div style="left:0;top:115px;width:192px;height:16.2px;background:#EDEDED"></div>
<span class="t" style="left:5.40px;top:117.70px;font-size:8.7px;line-height:12px;color:#5E5E5E;letter-spacing:0.035px;font-weight:bold;">Basic Shapes</span>
<div style="left:0;top:196px;width:192px;height:16.2px;background:#EDEDED"></div>
<span class="t" style="left:5.40px;top:198.70px;font-size:8.7px;line-height:12px;color:#5E5E5E;letter-spacing:0.320px;font-weight:bold;">Block Arrows</span>
<div style="left:0;top:261px;width:192px;height:16.2px;background:#EDEDED"></div>
<span class="t" style="left:5.40px;top:263.70px;font-size:8.7px;line-height:12px;color:#5E5E5E;letter-spacing:0.321px;font-weight:bold;">Equation Shapes</span>
<div style="left:0;top:294px;width:192px;height:16.2px;background:#EDEDED"></div>
<span class="t" style="left:5.40px;top:296.70px;font-size:8.7px;line-height:12px;color:#5E5E5E;letter-spacing:0.301px;font-weight:bold;">Flowchart</span>
<div style="left:0;top:359px;width:192px;height:16.2px;background:#EDEDED"></div>
<span class="t" style="left:5.40px;top:361.70px;font-size:8.7px;line-height:12px;color:#5E5E5E;letter-spacing:0.266px;font-weight:bold;">Stars and Banners</span>
<div style="left:0;top:408.6px;width:192px;height:16.2px;background:#EDEDED"></div>
<span class="t" style="left:5.40px;top:411.30px;font-size:8.7px;line-height:12px;color:#5E5E5E;letter-spacing:0.335px;font-weight:bold;">Callouts</span>
</div>
<svg style="left:230px;top:128.8px" width="16" height="16" viewBox="0 0 16 16" class="sh"><rect x="2.600" y="3.500" width="10.900" height="9" style="stroke:#727272;stroke-width:1.35;fill:#fff"/><g style="fill:#3A96DD;stroke:none"><circle cx="2.600" cy="3.500" r="1.450"/><circle cx="13.500" cy="3.500" r="1.450"/><circle cx="2.600" cy="12.500" r="1.450"/><circle cx="13.500" cy="12.500" r="1.450"/></g><text x="8.050" y="11" font-size="8.200" font-weight="bold" text-anchor="middle" style="fill:#2B88D8">A</text></svg>
<svg style="left:246px;top:128.8px" width="16" height="16" viewBox="0 0 16 16" class="sh"><path d="M2.300 2.600L13.400 13.400" class="n"/></svg>
<svg style="left:262px;top:128.8px" width="16" height="16" viewBox="0 0 16 16" class="sh"><path d="M2.300 2.600L12.600 12.600" class="n"/><path d="M13.8 13.8 11.04 12.88 12.88 11.04z" class="k"/></svg>
<div style="left:278px;top:128.8px;width:16px;height:16px;background:#D0D0D0;"></div>
<svg style="left:278px;top:128.8px" width="16" height="16" viewBox="0 0 16 16" class="sh"><rect x="2" y="3.600" width="12" height="8.800"/></svg>
<svg style="left:294px;top:128.8px" width="16" height="16" viewBox="0 0 16 16" class="sh"><ellipse cx="8" cy="8" rx="6.300" ry="4.500"/></svg>
<svg style="left:310px;top:128.8px" width="16" height="16" viewBox="0 0 16 16" class="sh"><rect x="2" y="3.600" width="12" height="8.800" rx="1.800"/></svg>
<svg style="left:326px;top:128.8px" width="16" height="16" viewBox="0 0 16 16" class="sh"><path d="M8 2.4 14 13.4 2 13.4z"/></svg>
<svg style="left:342px;top:128.8px" width="16" height="16" viewBox="0 0 16 16" class="sh"><path d="M2.400 3H8V13H13.600" class="n"/></svg>
<svg style="left:358px;top:128.8px" width="16" height="16" viewBox="0 0 16 16" class="sh"><path d="M2.400 3H8V12.600H11.600" class="n"/><path d="M14 12.6 11.4 14 11.4 11.2z" class="k"/></svg>
<svg style="left:374px;top:128.8px" width="16" height="16" viewBox="0 0 16 16" class="sh"><path d="M1.8 5.8 8.6 5.8 8.6 3 14.2 8 8.6 13 8.6 10.2 1.8 10.2z"/></svg>
<svg style="left:390px;top:128.8px" width="16" height="16" viewBox="0 0 16 16" class="sh"><g transform="rotate(90 8 8)"><path d="M1.8 5.8 8.6 5.8 8.6 3 14.2 8 8.6 13 8.6 10.2 1.8 10.2z"/></g></svg>
<svg style="left:406px;top:128.8px" width="16" height="16" viewBox="0 0 16 16" class="sh"><path d="M4.200 3.600H12.200C10.200 5.400 10.600 8 13.800 7.800V11.800Q13.800 13.400 12.200 13.400H3.800Q2.200 13.400 2.200 11.800V5.600Q2.200 3.600 4.200 3.600z"/></svg>
<svg style="left:230px;top:144.8px" width="16" height="16" viewBox="0 0 16 16" class="sh"><path d="M2.800 2.400C2.400 6.400 3.600 10.400 6.400 11.400M4.400 8.600C6.400 6 9.400 3.400 12 2.800C14.400 2.600 13.600 5.400 11.400 6.800C9.400 8 7 8.600 7 9.400C7 10 9 9.800 11 10C13 10.200 14.200 11 13.600 12.400C13.200 13.400 12.200 13.800 11.200 13.600" class="n"/></svg>
<svg style="left:246px;top:144.8px" width="16" height="16" viewBox="0 0 16 16" class="sh"><path d="M2 2.400Q11.600 2.400 13.800 13" class="n"/></svg>
<svg style="left:262px;top:144.8px" width="16" height="16" viewBox="0 0 16 16" class="sh"><path d="M2.400 7.400C3.600 3.400 6 2.400 7.800 5.600C9.600 8.800 10.400 12.400 13.600 13" class="n"/></svg>
<svg style="left:278px;top:144.8px" width="16" height="16" viewBox="0 0 16 16" class="sh"><path d="M10.200 2.400C8 2.400 8.400 4 8.400 5.600C8.400 7.200 7.800 8 6.400 8C7.800 8 8.400 8.800 8.400 10.400C8.400 12 8 13.600 10.200 13.600" class="n"/></svg>
<svg style="left:294px;top:144.8px" width="16" height="16" viewBox="0 0 16 16" class="sh"><g transform="translate(16 0) scale(-1 1)"><path d="M10.200 2.400C8 2.400 8.400 4 8.400 5.600C8.400 7.200 7.800 8 6.400 8C7.800 8 8.400 8.800 8.400 10.400C8.400 12 8 13.600 10.200 13.600" class="n"/></g></svg>
<svg style="left:310px;top:144.8px" width="16" height="16" viewBox="0 0 16 16" class="sh"><path d="M8 2.3 9.47 6.48 13.9 6.58 10.38 9.27 11.64 13.52 8 11 4.36 13.52 5.62 9.27 2.1 6.58 6.53 6.48z"/></svg>
<svg style="left:230px;top:178px" width="16" height="16" viewBox="0 0 16 16" class="sh"><path d="M2.300 2.600L13.400 13.400" class="n"/></svg>
<svg style="left:246px;top:178px" width="16" height="16" viewBox="0 0 16 16" class="sh"><path d="M2.300 2.600L12.600 12.600" class="n"/><path d="M13.8 13.8 11.04 12.88 12.88 11.04z" class="k"/></svg>
<svg style="left:262px;top:178px" width="16" height="16" viewBox="0 0 16 16" class="sh"><path d="M4 4L12.400 12.400" class="n"/><path d="M13.8 13.8 11.04 12.88 12.88 11.04z" class="k"/><path d="M2.4 2.4 5.16 3.32 3.32 5.16z" class="k"/></svg>
<svg style="left:278px;top:178px" width="16" height="16" viewBox="0 0 16 16" class="sh"><path d="M2.400 3H8V13H13.600" class="n"/></svg>
<svg style="left:294px;top:178px" width="16" height="16" viewBox="0 0 16 16" class="sh"><path d="M2.400 3H8V12.600H11.600" class="n"/><path d="M14 12.6 11.4 14 11.4 11.2z" class="k"/></svg>
<svg style="left:310px;top:178px" width="16" height="16" viewBox="0 0 16 16" class="sh"><path d="M5 3.400H8V12.600H11.600" class="n"/><path d="M14 12.6 11.4 14 11.4 11.2z" class="k"/><path d="M2.2 3.4 4.8 2 4.8 4.8z" class="k"/></svg>
<svg style="left:326px;top:178px" width="16" height="16" viewBox="0 0 16 16" class="sh"><path d="M5 3.400C11.600 3.400 11.600 8 8 8C4.400 8 4.400 12.600 11 12.600" class="n"/></svg>
<svg style="left:342px;top:178px" width="16" height="16" viewBox="0 0 16 16" class="sh"><path d="M5 3.400C11.600 3.400 11.600 8 8 8C4.800 8 4.600 11.600 8.400 12.400" class="n"/><path d="M11.4 13 8.57 13.83 9.15 11.09z" class="k"/></svg>
<svg style="left:358px;top:178px" width="16" height="16" viewBox="0 0 16 16" class="sh"><path d="M7.600 3.600C11 4.400 11 8 8 8C4.800 8 4.600 11.600 8.400 12.400" class="n"/><path d="M11.4 13 8.57 13.83 9.15 11.09z" class="k"/><path d="M4.6 3 7.43 2.17 6.85 4.91z" class="k"/></svg>
<svg style="left:374px;top:178px" width="16" height="16" viewBox="0 0 16 16" class="sh"><path d="M2.400 7.400C3.600 3.400 6 2.400 7.800 5.600C9.600 8.800 10.400 12.400 13.600 13" class="n"/></svg>
<svg style="left:390px;top:178px" width="16" height="16" viewBox="0 0 16 16" class="sh"><path d="M4.200 3.600H12.200C10.200 5.400 10.600 8 13.800 7.800V11.800Q13.800 13.400 12.200 13.400H3.800Q2.200 13.400 2.200 11.800V5.600Q2.200 3.600 4.200 3.600z"/></svg>
<svg style="left:406px;top:178px" width="16" height="16" viewBox="0 0 16 16" class="sh"><path d="M2.800 2.400C2.400 6.400 3.600 10.400 6.400 11.400M4.400 8.600C6.400 6 9.400 3.400 12 2.800C14.400 2.600 13.600 5.400 11.400 6.800C9.400 8 7 8.600 7 9.400C7 10 9 9.800 11 10C13 10.200 14.200 11 13.600 12.400C13.200 13.400 12.200 13.800 11.200 13.600" class="n"/></svg>
<svg style="left:230px;top:211px" width="16" height="16" viewBox="0 0 16 16" class="sh"><rect x="2" y="3.600" width="12" height="8.800"/></svg>
<svg style="left:246px;top:211px" width="16" height="16" viewBox="0 0 16 16" class="sh"><rect x="2" y="3.600" width="12" height="8.800" rx="1.800"/></svg>
<svg style="left:262px;top:211px" width="16" height="16" viewBox="0 0 16 16" class="sh"><path d="M2 3.6 10.6 3.6 14 6.6 14 12.4 2 12.4z"/></svg>
<svg style="left:278px;top:211px" width="16" height="16" viewBox="0 0 16 16" class="sh"><path d="M5.4 3.6 10.6 3.6 14 6.6 14 12.4 2 12.4 2 6.6z"/></svg>
<svg style="left:294px;top:211px" width="16" height="16" viewBox="0 0 16 16" class="sh"><path d="M5.4 3.6 14 3.6 14 9.4 10.6 12.4 2 12.4 2 6.6z"/></svg>
<svg style="left:310px;top:211px" width="16" height="16" viewBox="0 0 16 16" class="sh"><path d="M5.4 3.6H10.6L14 6.6V12.4H2V6.6Q2 3.6 5.4 3.6z"/></svg>
<svg style="left:326px;top:211px" width="16" height="16" viewBox="0 0 16 16" class="sh"><path d="M2 3.6H10.6Q14 3.6 14 6.6V12.4H2z"/></svg>
<svg style="left:342px;top:211px" width="16" height="16" viewBox="0 0 16 16" class="sh"><path d="M5.4 3.6H10.6Q14 3.6 14 6.6V12.4H2V6.6Q2 3.6 5.4 3.6z"/></svg>
<svg style="left:358px;top:211px" width="16" height="16" viewBox="0 0 16 16" class="sh"><path d="M5.4 3.6H14V9.4Q14 12.4 10.6 12.4H2V6.6Q2 3.6 5.4 3.6z"/></svg>
<svg style="left:230px;top:244px" width="16" height="16" viewBox="0 0 16 16" class="sh"><rect x="2.600" y="3.500" width="10.900" height="9" style="stroke:#727272;stroke-width:1.35;fill:#fff"/><g style="fill:#3A96DD;stroke:none"><circle cx="2.600" cy="3.500" r="1.450"/><circle cx="13.500" cy="3.500" r="1.450"/><circle cx="2.600" cy="12.500" r="1.450"/><circle cx="13.500" cy="12.500" r="1.450"/></g><text x="8.050" y="11" font-size="8.200" font-weight="bold" text-anchor="middle" style="fill:#2B88D8">A</text></svg>
<svg style="left:246px;top:244px" width="16" height="16" viewBox="0 0 16 16" class="sh"><ellipse cx="8" cy="8" rx="6.300" ry="4.500"/></svg>
<svg style="left:262px;top:244px" width="16" height="16" viewBox="0 0 16 16" class="sh"><path d="M8 2.4 14 13.4 2 13.4z"/></svg>
<svg style="left:278px;top:244px" width="16" height="16" viewBox="0 0 16 16" class="sh"><path d="M2.4 2.4 13.6 13.4 2.4 13.4z"/></svg>
<svg style="left:294px;top:244px" width="16" height="16" viewBox="0 0 16 16" class="sh"><path d="M5.4 3.4 14.2 3.4 10.6 12.6 1.8 12.6z"/></svg>
<svg style="left:310px;top:244px" width="16" height="16" viewBox="0 0 16 16" class="sh"><path d="M5.6 4.4 10.4 4.4 13.4 12 2.6 12z"/></svg>
<svg style="left:326px;top:244px" width="16" height="16" viewBox="0 0 16 16" class="sh"><path d="M8 2 14.4 8 8 14 1.6 8z"/></svg>
<svg style="left:342px;top:244px" width="16" height="16" viewBox="0 0 16 16" class="sh"><path d="M8 2.3 14.09 6.58 11.76 13.52 4.24 13.52 1.91 6.58z"/></svg>
<svg style="left:358px;top:244px" width="16" height="16" viewBox="0 0 16 16" class="sh"><path d="M4.6 2.8 11.4 2.8 14.4 8 11.4 13.2 4.6 13.2 1.6 8z"/></svg>
<svg style="left:374px;top:244px" width="16" height="16" viewBox="0 0 16 16" class="sh"><path d="M8 2.1 12.93 4.4 14.14 9.56 10.73 13.7 5.27 13.7 1.86 9.56 3.07 4.4z"/><text x="8" y="9.8" font-size="5.6" text-anchor="middle" style="fill:#6A6A6A">7</text></svg>
<svg style="left:390px;top:244px" width="16" height="16" viewBox="0 0 16 16" class="sh"><path d="M10.49 2.36 14.01 5.67 14.01 10.33 10.49 13.64 5.51 13.64 1.99 10.33 1.99 5.67 5.51 2.36z"/><text x="8" y="9.8" font-size="5.6" text-anchor="middle" style="fill:#6A6A6A">8</text></svg>
<svg style="left:406px;top:244px" width="16" height="16" viewBox="0 0 16 16" class="sh"><path d="M10.01 2.29 13.26 4.47 14.5 8 13.26 11.53 10.01 13.71 5.99 13.71 2.74 11.53 1.5 8 2.74 4.47 5.99 2.29z"/><text x="8" y="9.8" font-size="5.2" text-anchor="middle" style="fill:#6A6A6A">10</text></svg>
<svg style="left:230px;top:260px" width="16" height="16" viewBox="0 0 16 16" class="sh"><path d="M9.66 2.2 12.53 3.76 14.18 6.45 14.18 9.55 12.53 12.24 9.66 13.8 6.34 13.8 3.47 12.24 1.82 9.55 1.82 6.45 3.47 3.76 6.34 2.2z"/><text x="8" y="9.8" font-size="5.2" text-anchor="middle" style="fill:#6A6A6A">12</text></svg>
<svg style="left:246px;top:260px" width="16" height="16" viewBox="0 0 16 16" class="sh"><path d="M8 8H14.200A6.200 6.200 0 1 1 8 1.800z"/></svg>
<svg style="left:262px;top:260px" width="16" height="16" viewBox="0 0 16 16" class="sh"><path d="M8.600 1.900L13.900 9.400A6.200 6.200 0 1 1 8.600 1.900z"/></svg>
<svg style="left:278px;top:260px" width="16" height="16" viewBox="0 0 16 16" class="sh"><path d="M14.200 2V8A6.200 6.200 0 1 1 8 1.800C10 2 12 2 14.200 2z"/></svg>
<svg style="left:294px;top:260px" width="16" height="16" viewBox="0 0 16 16" class="sh"><rect x="2" y="2.600" width="12" height="10.800"/><rect x="4.200" y="4.800" width="7.600" height="6.400" style="fill:#fff"/></svg>
<svg style="left:310px;top:260px" width="16" height="16" viewBox="0 0 16 16" class="sh"><path d="M2 2.6 14 2.6 11.8 4.8 4.4 4.8 4.4 11.2 2 13.4z"/></svg>
<svg style="left:326px;top:260px" width="16" height="16" viewBox="0 0 16 16" class="sh"><path d="M2.2 2.6 6 2.6 6 9.6 13.8 9.6 13.8 13.4 2.2 13.4z"/></svg>
<svg style="left:342px;top:260px" width="16" height="16" viewBox="0 0 16 16" class="sh"><path d="M2 13.4 2 8.4 9.4 2.6 14 2.6z"/></svg>
<svg style="left:358px;top:260px" width="16" height="16" viewBox="0 0 16 16" class="sh"><path d="M5.4 2.2 10.6 2.2 10.6 5.4 14 5.4 14 10.6 10.6 10.6 10.6 13.8 5.4 13.8 5.4 10.6 2 10.6 2 5.4 5.4 5.4z"/></svg>
<svg style="left:374px;top:260px" width="16" height="16" viewBox="0 0 16 16" class="sh"><path d="M4.800 2.400H11.200A2.800 2.800 0 0 0 14 5.200V10.800A2.800 2.800 0 0 0 11.200 13.600H4.800A2.800 2.800 0 0 0 2 10.800V5.200A2.800 2.800 0 0 0 4.800 2.400z"/></svg>
<svg style="left:390px;top:260px" width="16" height="16" viewBox="0 0 16 16" class="sh"><path d="M3.600 4V12.400A4.400 1.600 0 0 0 12.400 12.400V4"/><ellipse cx="8" cy="4" rx="4.400" ry="1.600"/></svg>
<svg style="left:406px;top:260px" width="16" height="16" viewBox="0 0 16 16" class="sh"><path d="M2 5.2 5 2.4 14 2.4 14 10.8 11 13.6 2 13.6z"/><path d="M2 5.200H11V13.600M11 5.200L14 2.400" class="n"/></svg>
<svg style="left:230px;top:276px" width="16" height="16" viewBox="0 0 16 16" class="sh"><rect x="2" y="2.600" width="12" height="10.800" style="fill:#ECECEC"/><rect x="4.200" y="4.800" width="7.600" height="6.400" style="fill:#fff;stroke-width:.9"/><path d="M2 2.600L4 4.600M14 2.600L12 4.600M2 13.400L4 11.400M14 13.400L12 11.400" class="n"/></svg>
<svg style="left:246px;top:276px" width="16" height="16" viewBox="0 0 16 16" class="sh"><circle cx="8" cy="8" r="6.200"/><circle cx="8" cy="8" r="3" style="fill:#fff"/></svg>
<svg style="left:262px;top:276px" width="16" height="16" viewBox="0 0 16 16" class="sh"><circle cx="8" cy="8" r="6.200"/><circle cx="8" cy="8" r="4.300" style="fill:#fff;stroke-width:.9"/><path d="M4.6 5.9 5.9 4.6 11.4 10.1 10.1 11.4z" style="stroke-width:.9"/></svg>
<svg style="left:278px;top:276px" width="16" height="16" viewBox="0 0 16 16" class="sh"><path d="M1.800 11.600A6.200 6.200 0 0 1 14.200 11.600H11A3 3 0 0 0 5 11.600z"/></svg>
<svg style="left:294px;top:276px" width="16" height="16" viewBox="0 0 16 16" class="sh"><path d="M2.2 2.4 13.8 2.4 13.8 10.4 10.6 13.6 2.2 13.6z"/><path d="M13.800 10.400L11.200 11 10.600 13.600" class="n"/></svg>
<svg style="left:310px;top:276px" width="16" height="16" viewBox="0 0 16 16" class="sh"><circle cx="8" cy="8" r="6.200"/><path d="M4.800 9.600Q8 13 11.200 9.600" class="n"/><circle cx="5.800" cy="6.200" r=".8" class="k"/><circle cx="10.200" cy="6.200" r=".8" class="k"/></svg>
<svg style="left:326px;top:276px" width="16" height="16" viewBox="0 0 16 16" class="sh"><path d="M8 13.600C2 9.400 1.400 6.600 2.400 4.600C3.600 2.400 6.800 2.400 8 5C9.200 2.400 12.400 2.400 13.600 4.600C14.600 6.600 14 9.400 8 13.600z"/></svg>
<svg style="left:342px;top:276px" width="16" height="16" viewBox="0 0 16 16" class="sh"><path d="M6.6 2 9.6 5.4 8.4 6 11.6 8.8 10.4 9.4 14 14 8 10.6 9.4 10 5.2 7.6 6.8 6.8 3 3.6z"/></svg>
<svg style="left:358px;top:276px" width="16" height="16" viewBox="0 0 16 16" class="sh"><circle cx="8" cy="8" r="3.400"/><path d="M13.2 8L14.3 8M11.68 11.68L12.45 12.45M8 13.2L8 14.3M4.32 11.68L3.55 12.45M2.8 8L1.7 8M4.32 4.32L3.55 3.55M8 2.8L8 1.7M11.68 4.32L12.45 3.55" class="n t"/></svg>
<svg style="left:374px;top:276px" width="16" height="16" viewBox="0 0 16 16" class="sh"><path d="M11.600 1.800A6.400 6.400 0 1 0 11.600 14.200A8 8 0 0 1 11.600 1.800z"/></svg>
<svg style="left:390px;top:276px" width="16" height="16" viewBox="0 0 16 16" class="sh"><path d="M4.600 11.800C2.400 12 1.400 9.800 2.800 8.400C1.600 6.400 3.400 4.400 5.200 5C6 3 8.800 2.800 9.600 4.400C11.400 3.200 13.600 4.600 13 6.600C14.800 7.600 14.400 10.400 12.400 10.600C12.200 12.600 9.800 13.200 8.800 12C7.600 13.600 5 13.400 4.600 11.800z"/></svg>
<svg style="left:406px;top:276px" width="16" height="16" viewBox="0 0 16 16" class="sh"><path d="M2 2.400Q11.600 2.400 13.800 13" class="n"/></svg>
<svg style="left:230px;top:292px" width="16" height="16" viewBox="0 0 16 16" class="sh"><path d="M5 2.600H3.400Q2.400 2.600 2.400 3.600V12.400Q2.400 13.400 3.400 13.400H5M11 2.600H12.600Q13.600 2.600 13.600 3.600V12.400Q13.600 13.400 12.600 13.400H11" class="n"/></svg>
<svg style="left:246px;top:292px" width="16" height="16" viewBox="0 0 16 16" class="sh"><path d="M6 2.400C4.200 2.400 4.600 4 4.600 5.600C4.600 7.200 4 8 2.800 8C4 8 4.600 8.800 4.600 10.400C4.600 12 4.200 13.600 6 13.600M10 2.400C11.800 2.400 11.400 4 11.400 5.600C11.400 7.200 12 8 13.200 8C12 8 11.400 8.800 11.400 10.400C11.400 12 11.800 13.600 10 13.600" class="n"/></svg>
<svg style="left:262px;top:292px" width="16" height="16" viewBox="0 0 16 16" class="sh"><path d="M10 2.600H7.600Q6.600 2.600 6.600 3.600V12.400Q6.600 13.400 7.600 13.400H10" class="n"/></svg>
<svg style="left:278px;top:292px" width="16" height="16" viewBox="0 0 16 16" class="sh"><g transform="translate(16 0) scale(-1 1)"><path d="M10 2.600H7.600Q6.600 2.600 6.600 3.600V12.400Q6.600 13.400 7.600 13.400H10" class="n"/></g></svg>
<svg style="left:294px;top:292px" width="16" height="16" viewBox="0 0 16 16" class="sh"><path d="M10.200 2.400C8 2.400 8.400 4 8.400 5.600C8.400 7.200 7.800 8 6.400 8C7.800 8 8.400 8.800 8.400 10.400C8.400 12 8 13.600 10.200 13.600" class="n"/></svg>
<svg style="left:310px;top:292px" width="16" height="16" viewBox="0 0 16 16" class="sh"><g transform="translate(16 0) scale(-1 1)"><path d="M10.200 2.400C8 2.400 8.400 4 8.400 5.600C8.400 7.200 7.800 8 6.400 8C7.800 8 8.400 8.800 8.400 10.400C8.400 12 8 13.600 10.200 13.600" class="n"/></g></svg>
<svg style="left:230px;top:325px" width="16" height="16" viewBox="0 0 16 16" class="sh"><path d="M1.8 5.8 8.6 5.8 8.6 3 14.2 8 8.6 13 8.6 10.2 1.8 10.2z"/></svg>
<svg style="left:246px;top:325px" width="16" height="16" viewBox="0 0 16 16" class="sh"><g transform="translate(16 0) scale(-1 1)"><path d="M1.8 5.8 8.6 5.8 8.6 3 14.2 8 8.6 13 8.6 10.2 1.8 10.2z"/></g></svg>
<svg style="left:262px;top:325px" width="16" height="16" viewBox="0 0 16 16" class="sh"><g transform="rotate(-90 8 8)"><path d="M1.8 5.8 8.6 5.8 8.6 3 14.2 8 8.6 13 8.6 10.2 1.8 10.2z"/></g></svg>
<svg style="left:278px;top:325px" width="16" height="16" viewBox="0 0 16 16" class="sh"><g transform="rotate(90 8 8)"><path d="M1.8 5.8 8.6 5.8 8.6 3 14.2 8 8.6 13 8.6 10.2 1.8 10.2z"/></g></svg>
<svg style="left:294px;top:325px" width="16" height="16" viewBox="0 0 16 16" class="sh"><path d="M1.6 8 5.4 4.2 5.4 6.2 10.6 6.2 10.6 4.2 14.4 8 10.6 11.8 10.6 9.8 5.4 9.8 5.4 11.8z"/></svg>
<svg style="left:310px;top:325px" width="16" height="16" viewBox="0 0 16 16" class="sh"><g transform="rotate(90 8 8)"><path d="M1.6 8 5.4 4.2 5.4 6.2 10.6 6.2 10.6 4.2 14.4 8 10.6 11.8 10.6 9.8 5.4 9.8 5.4 11.8z"/></g></svg>
<svg style="left:326px;top:325px" width="16" height="16" viewBox="0 0 16 16" class="sh"><path d="M8 1.8 10 3.8 9.4 3.8 9.4 6.6 12.2 6.6 12.2 6 14.2 8 12.2 10 12.2 9.4 9.4 9.4 9.4 12.2 10 12.2 8 14.2 6 12.2 6.6 12.2 6.6 9.4 3.8 9.4 3.8 10 1.8 8 3.8 6 3.8 6.6 6.6 6.6 6.6 3.8 6 3.8z"/></svg>
<svg style="left:342px;top:325px" width="16" height="16" viewBox="0 0 16 16" class="sh"><path d="M8 2.6 10.2 4.8 9.4 4.8 9.4 9.4 12.2 9.4 12.2 8.6 14.4 10.8 12.2 13 12.2 12.2 3.8 12.2 3.8 13 1.6 10.8 3.8 8.6 3.8 9.4 6.6 9.4 6.6 4.8 5.8 4.8z"/></svg>
<svg style="left:358px;top:325px" width="16" height="16" viewBox="0 0 16 16" class="sh"><path d="M2.200 13.600V7.400Q2.200 4 5.600 4H10.600V2.200L14 5.400L10.600 8.600V6.800H6.400Q5 6.800 5 8.200V13.600z"/></svg>
<svg style="left:374px;top:325px" width="16" height="16" viewBox="0 0 16 16" class="sh"><path d="M2.200 13.600V6.800A4.400 4.400 0 0 1 11 6.800V9H12.800L9.800 12.400L6.800 9H8.400V7A1.800 1.800 0 0 0 4.800 7V13.600z"/></svg>
<svg style="left:390px;top:325px" width="16" height="16" viewBox="0 0 16 16" class="sh"><path d="M1.8 10.6 4.8 7.6 4.8 9.4 9.6 9.4 9.6 5 7.8 5 10.8 2 13.8 5 12 5 12 11.8 4.8 11.8 4.8 13.6z"/></svg>
<svg style="left:406px;top:325px" width="16" height="16" viewBox="0 0 16 16" class="sh"><path d="M2 10.8 9.6 10.8 9.6 5 7.8 5 10.8 2 13.8 5 12 5 12 13.4 2 13.4z"/></svg>
<svg style="left:230px;top:341px" width="16" height="16" viewBox="0 0 16 16" class="sh"><path d="M11.600 2.600C5 1.600 1.600 5.400 2 8.400C2.400 11.400 5.600 12.600 9 12.400V14L13.400 11L9 8.200V10C6.600 10.200 4.800 9.400 4.600 7.800C4.400 5.600 7.600 4.200 11.600 5.200z"/><path d="M11.600 2.600C8 3.200 6 5 6.200 6.400" class="n"/></svg>
<svg style="left:246px;top:341px" width="16" height="16" viewBox="0 0 16 16" class="sh"><g transform="translate(16 0) scale(-1 1)"><path d="M11.600 2.600C5 1.600 1.600 5.400 2 8.400C2.400 11.400 5.600 12.600 9 12.400V14L13.400 11L9 8.200V10C6.600 10.200 4.800 9.400 4.600 7.800C4.400 5.600 7.600 4.200 11.600 5.200z"/><path d="M11.600 2.600C8 3.200 6 5 6.200 6.400" class="n"/></g></svg>
<svg style="left:262px;top:341px" width="16" height="16" viewBox="0 0 16 16" class="sh"><g transform="rotate(-90 8 8)"><path d="M11.600 2.600C5 1.600 1.600 5.400 2 8.400C2.400 11.400 5.600 12.600 9 12.400V14L13.400 11L9 8.200V10C6.600 10.200 4.800 9.400 4.600 7.800C4.400 5.600 7.600 4.200 11.600 5.200z"/><path d="M11.600 2.600C8 3.200 6 5 6.200 6.400" class="n"/></g></svg>
<svg style="left:278px;top:341px" width="16" height="16" viewBox="0 0 16 16" class="sh"><g transform="rotate(-90 8 8)"><g transform="translate(16 0) scale(-1 1)"><path d="M11.600 2.600C5 1.600 1.600 5.400 2 8.400C2.400 11.400 5.600 12.600 9 12.400V14L13.400 11L9 8.200V10C6.600 10.200 4.800 9.400 4.600 7.800C4.400 5.600 7.600 4.200 11.600 5.200z"/><path d="M11.600 2.600C8 3.200 6 5 6.200 6.400" class="n"/></g></g></svg>
<svg style="left:294px;top:341px" width="16" height="16" viewBox="0 0 16 16" class="sh"><path d="M6 5.8 9.2 5.8 9.2 3 14.4 8 9.2 13 9.2 10.2 6 10.2z"/><path d="M2.200 5.800v4.400M4.100 5.800v4.400" class="n"/></svg>
<svg style="left:310px;top:341px" width="16" height="16" viewBox="0 0 16 16" class="sh"><path d="M1.8 5.8 9 5.8 9 3 14.4 8 9 13 9 10.2 1.8 10.2 4 8z"/></svg>
<svg style="left:326px;top:341px" width="16" height="16" viewBox="0 0 16 16" class="sh"><path d="M2 3.4 10 3.4 14.2 8 10 12.6 2 12.6z"/></svg>
<svg style="left:342px;top:341px" width="16" height="16" viewBox="0 0 16 16" class="sh"><path d="M2 3.4 9.6 3.4 14.2 8 9.6 12.6 2 12.6 6.4 8z"/></svg>
<svg style="left:358px;top:341px" width="16" height="16" viewBox="0 0 16 16" class="sh"><path d="M2 2.6 9 2.6 9 6.2 11 6.2 11 4.8 14.2 8 11 11.2 11 9.8 9 9.8 9 13.4 2 13.4z"/></svg>
<svg style="left:374px;top:341px" width="16" height="16" viewBox="0 0 16 16" class="sh"><g transform="rotate(90 8 8)"><path d="M2 2.6 9 2.6 9 6.2 11 6.2 11 4.8 14.2 8 11 11.2 11 9.8 9 9.8 9 13.4 2 13.4z"/></g></svg>
<svg style="left:390px;top:341px" width="16" height="16" viewBox="0 0 16 16" class="sh"><g transform="translate(16 0) scale(-1 1)"><path d="M2 2.6 9 2.6 9 6.2 11 6.2 11 4.8 14.2 8 11 11.2 11 9.8 9 9.8 9 13.4 2 13.4z"/></g></svg>
<svg style="left:406px;top:341px" width="16" height="16" viewBox="0 0 16 16" class="sh"><g transform="rotate(-90 8 8)"><path d="M2 2.6 9 2.6 9 6.2 11 6.2 11 4.8 14.2 8 11 11.2 11 9.8 9 9.8 9 13.4 2 13.4z"/></g></svg>
<svg style="left:230px;top:357px" width="16" height="16" viewBox="0 0 16 16" class="sh"><path d="M5 2.6 11 2.6 11 6.6 12 6.6 12 5.2 14.6 8 12 10.8 12 9.4 11 9.4 11 13.4 5 13.4 5 9.4 4 9.4 4 10.8 1.4 8 4 5.2 4 6.6 5 6.6z"/></svg>
<svg style="left:246px;top:357px" width="16" height="16" viewBox="0 0 16 16" class="sh"><path d="M8 1.4 10.4 3.8 9.2 3.8 9.2 4.8 11.2 4.8 11.2 6.8 12.2 6.8 12.2 5.6 14.6 8 12.2 10.4 12.2 9.2 11.2 9.2 11.2 11.2 9.2 11.2 9.2 12.2 10.4 12.2 8 14.6 5.6 12.2 6.8 12.2 6.8 11.2 4.8 11.2 4.8 9.2 3.8 9.2 3.8 10.4 1.4 8 3.8 5.6 3.8 6.8 4.8 6.8 4.8 4.8 6.8 4.8 6.8 3.8 5.6 3.8z"/></svg>
<svg style="left:262px;top:357px" width="16" height="16" viewBox="0 0 16 16" class="sh"><path d="M2 13.400V8A6 5.600 0 0 1 13 6.800V9.600H14.600L11.600 13 8.600 9.600H10.200V7.600A3 2.800 0 0 0 4.800 8V13.400z"/></svg>
<svg style="left:230px;top:390px" width="16" height="16" viewBox="0 0 16 16" class="sh"><path d="M6.2 2.2 9.8 2.2 9.8 6.2 13.8 6.2 13.8 9.8 9.8 9.8 9.8 13.8 6.2 13.8 6.2 9.8 2.2 9.8 2.2 6.2 6.2 6.2z"/></svg>
<svg style="left:246px;top:390px" width="16" height="16" viewBox="0 0 16 16" class="sh"><rect x="2" y="6.400" width="12" height="3.200"/></svg>
<svg style="left:262px;top:390px" width="16" height="16" viewBox="0 0 16 16" class="sh"><g transform="rotate(45 8 8)"><path d="M6.4 1.6 9.6 1.6 9.6 6.4 14.4 6.4 14.4 9.6 9.6 9.6 9.6 14.4 6.4 14.4 6.4 9.6 1.6 9.6 1.6 6.4 6.4 6.4z"/></g></svg>
<svg style="left:278px;top:390px" width="16" height="16" viewBox="0 0 16 16" class="sh"><rect x="2" y="6.800" width="12" height="2.400"/><circle cx="8" cy="3.800" r="1.300"/><circle cx="8" cy="12.200" r="1.300"/></svg>
<svg style="left:294px;top:390px" width="16" height="16" viewBox="0 0 16 16" class="sh"><rect x="2.200" y="3.800" width="11.600" height="3.200"/><rect x="2.200" y="9" width="11.600" height="3.200"/></svg>
<svg style="left:310px;top:390px" width="16" height="16" viewBox="0 0 16 16" class="sh"><rect x="2.200" y="3.800" width="11.600" height="3.200"/><rect x="2.200" y="9" width="11.600" height="3.200"/><path d="M10.2 2 12.6 2 5.8 14 3.4 14z"/></svg>
<svg style="left:230px;top:423px" width="16" height="16" viewBox="0 0 16 16" class="sh"><rect x="2" y="3.800" width="12" height="8.400"/></svg>
<svg style="left:246px;top:423px" width="16" height="16" viewBox="0 0 16 16" class="sh"><rect x="2" y="3.800" width="12" height="8.400" rx="1.800"/></svg>
<svg style="left:262px;top:423px" width="16" height="16" viewBox="0 0 16 16" class="sh"><path d="M8 3.4 14.4 8 8 12.6 1.6 8z"/></svg>
<svg style="left:278px;top:423px" width="16" height="16" viewBox="0 0 16 16" class="sh"><path d="M5 3.8 14.2 3.8 11 12.2 1.8 12.2z"/></svg>
<svg style="left:294px;top:423px" width="16" height="16" viewBox="0 0 16 16" class="sh"><rect x="2" y="3" width="12" height="10"/><path d="M4 3V13M12 3V13" class="n"/></svg>
<svg style="left:310px;top:423px" width="16" height="16" viewBox="0 0 16 16" class="sh"><rect x="2.400" y="2.600" width="11.200" height="10.800"/><path d="M4.600 2.600V13.400M2.400 4.800H13.600" class="n"/></svg>
<svg style="left:326px;top:423px" width="16" height="16" viewBox="0 0 16 16" class="sh"><path d="M2 3H14V11.600C11 10 9.400 11.200 8 12.400C6.400 13.600 4 13.600 2 12.400z"/></svg>
<svg style="left:342px;top:423px" width="16" height="16" viewBox="0 0 16 16" class="sh"><path d="M4.400 4.600V2.400H14.400V10.400H12.400M3.200 6V4.600H13.200V11.600" class="n"/><path d="M2 6H12V12.800C9.400 11.600 8.200 12.400 7 13.200C5.600 14.200 3.600 14 2 13.200z"/></svg>
<svg style="left:358px;top:423px" width="16" height="16" viewBox="0 0 16 16" class="sh"><rect x="2" y="4.600" width="12" height="6.800" rx="3.400"/></svg>
<svg style="left:374px;top:423px" width="16" height="16" viewBox="0 0 16 16" class="sh"><path d="M4.6 4.2 11.4 4.2 14.4 8 11.4 11.8 4.6 11.8 1.6 8z"/></svg>
<svg style="left:390px;top:423px" width="16" height="16" viewBox="0 0 16 16" class="sh"><path d="M2 6.4 14 3.6 14 12.4 2 12.4z"/></svg>
<svg style="left:406px;top:423px" width="16" height="16" viewBox="0 0 16 16" class="sh"><path d="M2 3.8 14 3.8 11.4 12.2 4.6 12.2z"/></svg>
<svg style="left:230px;top:439px" width="16" height="16" viewBox="0 0 16 16" class="sh"><circle cx="8" cy="8" r="5.800"/></svg>
<svg style="left:246px;top:439px" width="16" height="16" viewBox="0 0 16 16" class="sh"><path d="M3 2.6 13 2.6 13 10 8 13.6 3 10z"/></svg>
<svg style="left:262px;top:439px" width="16" height="16" viewBox="0 0 16 16" class="sh"><path d="M5.4 2.8 13.8 2.8 13.8 13.2 2.2 13.2 2.2 6z"/></svg>
<svg style="left:278px;top:439px" width="16" height="16" viewBox="0 0 16 16" class="sh"><path d="M2 4C4 5.600 6 5.600 8 4.400C10 3.200 12 3.200 14 4.400V12C12 10.800 10 10.800 8 12C6 13.200 4 13.200 2 11.600z"/></svg>
<svg style="left:294px;top:439px" width="16" height="16" viewBox="0 0 16 16" class="sh"><circle cx="8" cy="8" r="6"/><path d="M3.800 3.800L12.200 12.200M12.200 3.800L3.800 12.200" class="n"/></svg>
<svg style="left:310px;top:439px" width="16" height="16" viewBox="0 0 16 16" class="sh"><circle cx="8" cy="8" r="6"/><path d="M8 2V14M2 8H14" class="n"/></svg>
<svg style="left:326px;top:439px" width="16" height="16" viewBox="0 0 16 16" class="sh"><path d="M4 2.4 12 2.4 4 13.6 12 13.6z"/></svg>
<svg style="left:342px;top:439px" width="16" height="16" viewBox="0 0 16 16" class="sh"><path d="M8 2 13 8 8 14 3 8z"/><path d="M3 8H13" class="n"/></svg>
<svg style="left:358px;top:439px" width="16" height="16" viewBox="0 0 16 16" class="sh"><path d="M8 2.6 14 13.4 2 13.4z"/></svg>
<svg style="left:374px;top:439px" width="16" height="16" viewBox="0 0 16 16" class="sh"><path d="M2 2.6 14 2.6 8 13.4z"/></svg>
<svg style="left:390px;top:439px" width="16" height="16" viewBox="0 0 16 16" class="sh"><path d="M4.400 3.200H14C11.600 5 11.600 11 14 12.800H4.400C1.400 11 1.400 5 4.400 3.200z"/></svg>
<svg style="left:406px;top:439px" width="16" height="16" viewBox="0 0 16 16" class="sh"><path d="M2.400 2.800H8.400A5.200 5.200 0 0 1 8.400 13.200H2.400z"/></svg>
<svg style="left:230px;top:455px" width="16" height="16" viewBox="0 0 16 16" class="sh"><path d="M8 2.200A5.800 5.800 0 1 0 8 13.800H14V11.600H11.800A5.800 5.800 0 0 0 8 2.200z"/></svg>
<svg style="left:246px;top:455px" width="16" height="16" viewBox="0 0 16 16" class="sh"><path d="M2 5.600V11A6 2.400 0 0 0 14 11V5.600"/><ellipse cx="8" cy="5.600" rx="6" ry="2.400"/></svg>
<svg style="left:262px;top:455px" width="16" height="16" viewBox="0 0 16 16" class="sh"><path d="M5 2.600H11A2.400 5.400 0 0 1 11 13.400H5A2.400 5.400 0 0 1 5 2.600z"/><path d="M11 2.600A2.400 5.400 0 0 0 11 13.400" class="n"/></svg>
<svg style="left:278px;top:455px" width="16" height="16" viewBox="0 0 16 16" class="sh"><path d="M5 2.800H11.400A3 5.200 0 0 1 11.400 13.200H5L1.800 8z"/></svg>
<svg style="left:230px;top:488px" width="16" height="16" viewBox="0 0 16 16" class="sh"><g style="stroke-width:1.35" transform="translate(1.1 1.1) scale(.86)"><path d="M8 3.8 10.6 1.6 10.2 5 14.2 4.2 11.6 7 14.6 8.6 11.6 9.4 12.8 13 9.8 10.8 8.8 14.6 7.2 11.2 4.6 13.6 5 10.2 1.4 10.6 4 8.2 1.6 5.6 5.2 5.8 5.4 2.2z"/></g></svg>
<svg style="left:246px;top:488px" width="16" height="16" viewBox="0 0 16 16" class="sh"><g style="stroke-width:1.35" transform="translate(1.1 1.1) scale(.86)"><path d="M8.4 4.2 10.2 1.8 10.4 4.8 13.8 3.2 12 6.2 14.8 6.6 12.4 8.4 14.2 10.4 11.6 10.4 12 13.2 9.6 11.2 8.8 14.4 7.2 11.6 5 14 5 10.8 1.6 11.6 3.8 8.8 1.2 7.2 4.2 6.4 2.6 3.4 6 5 6.6 2z"/></g></svg>
<svg style="left:262px;top:488px" width="16" height="16" viewBox="0 0 16 16" class="sh"><path d="M8 2.2 9.13 6.87 13.8 8 9.13 9.13 8 13.8 6.87 9.13 2.2 8 6.87 6.87z"/></svg>
<svg style="left:278px;top:488px" width="16" height="16" viewBox="0 0 16 16" class="sh"><path d="M8 2.3 9.47 6.48 13.9 6.58 10.38 9.27 11.64 13.52 8 11 4.36 13.52 5.62 9.27 2.1 6.58 6.53 6.48z"/></svg>
<svg style="left:294px;top:488px" width="16" height="16" viewBox="0 0 16 16" class="sh"><path d="M8 1.7 9.8 4.88 13.46 4.85 11.6 8 13.46 11.15 9.8 11.12 8 14.3 6.2 11.12 2.54 11.15 4.4 8 2.54 4.85 6.2 4.88z"/></svg>
<svg style="left:310px;top:488px" width="16" height="16" viewBox="0 0 16 16" class="sh"><path d="M8 2 9.65 4.78 12.85 4.33 11.7 7.35 14.04 9.58 10.97 10.57 10.69 13.79 8 12 5.31 13.79 5.03 10.57 1.96 9.58 4.3 7.35 3.15 4.33 6.35 4.78z"/></svg>
<svg style="left:326px;top:488px" width="16" height="16" viewBox="0 0 16 16" class="sh"><path d="M8 1.7 9.94 3.33 12.72 3.28 12.67 6.06 14.3 8 12.67 9.94 12.72 12.72 9.94 12.67 8 14.3 6.06 12.67 3.28 12.72 3.33 9.94 1.7 8 3.33 6.06 3.28 3.28 6.06 3.33z"/><text x="8" y="9.8" font-size="5.6" text-anchor="middle" style="fill:#6A6A6A">8</text></svg>
<svg style="left:342px;top:488px" width="16" height="16" viewBox="0 0 16 16" class="sh"><path d="M8 1.7 9.56 3.2 11.98 2.52 12.26 4.9 14.17 5.99 12.9 8 14.17 10.01 12.26 11.1 11.98 13.48 9.56 12.8 8 14.3 6.44 12.8 4.02 13.48 3.74 11.1 1.83 10.01 3.1 8 1.83 5.99 3.74 4.9 4.02 2.52 6.44 3.2z"/><text x="8" y="9.8" font-size="5.2" text-anchor="middle" style="fill:#6A6A6A">10</text></svg>
<svg style="left:358px;top:488px" width="16" height="16" viewBox="0 0 16 16" class="sh"><path d="M8 1.7 9.3 3.13 11.43 2.06 11.89 4.11 13.94 4.57 12.87 6.7 14.3 8 12.87 9.3 13.94 11.43 11.89 11.89 11.43 13.94 9.3 12.87 8 14.3 6.7 12.87 4.57 13.94 4.11 11.89 2.06 11.43 3.13 9.3 1.7 8 3.13 6.7 2.06 4.57 4.11 4.11 4.57 2.06 6.7 3.13z" style="stroke-width:0.9"/><text x="8" y="9.8" font-size="5.2" text-anchor="middle" style="fill:#6A6A6A">12</text></svg>
<svg style="left:374px;top:488px" width="16" height="16" viewBox="0 0 16 16" class="sh"><path d="M8 1.7 9.12 3.11 10.95 1.88 11.45 3.67 13.57 3.56 12.76 5.71 14.28 6.57 12.9 8 14.28 9.43 12.76 10.29 13.57 12.44 11.45 12.33 10.95 14.12 9.12 12.89 8 14.3 6.88 12.89 5.05 14.12 4.55 12.33 2.43 12.44 3.24 10.29 1.72 9.43 3.1 8 1.72 6.57 3.24 5.71 2.43 3.56 4.55 3.67 5.05 1.88 6.88 3.11z" style="stroke-width:0.9"/><text x="8" y="9.8" font-size="5.2" text-anchor="middle" style="fill:#6A6A6A">16</text></svg>
<svg style="left:390px;top:488px" width="16" height="16" viewBox="0 0 16 16" class="sh"><path d="M8 1.7 8.99 3.01 10.57 1.79 11.13 3.32 13.14 2.86 12.68 4.87 14.21 5.43 12.99 7.01 14.3 8 12.99 8.99 14.21 10.57 12.68 11.13 13.14 13.14 11.13 12.68 10.57 14.21 8.99 12.99 8 14.3 7.01 12.99 5.43 14.21 4.87 12.68 2.86 13.14 3.32 11.13 1.79 10.57 3.01 8.99 1.7 8 3.01 7.01 1.79 5.43 3.32 4.87 2.86 2.86 4.87 3.32 5.43 1.79 7.01 3.01z" style="stroke-width:0.85"/><text x="8" y="9.8" font-size="5.2" text-anchor="middle" style="fill:#6A6A6A">24</text></svg>
<svg style="left:406px;top:488px" width="16" height="16" viewBox="0 0 16 16" class="sh"><path d="M8 1.7 8.9 2.9 10.27 1.76 10.82 3.11 12.65 2.46 12.48 4.24 14.04 4.51 13.05 6.16 14.29 6.89 13.1 8 14.29 9.11 13.05 9.84 14.04 11.49 12.48 11.76 12.65 13.54 10.82 12.89 10.27 14.24 8.9 13.1 8 14.3 7.1 13.1 5.73 14.24 5.18 12.89 3.35 13.54 3.52 11.76 1.96 11.49 2.95 9.84 1.71 9.11 2.9 8 1.71 6.89 2.95 6.16 1.96 4.51 3.52 4.24 3.35 2.46 5.18 3.11 5.73 1.76 7.1 2.9z" style="stroke-width:0.85"/><text x="8" y="9.8" font-size="5.2" text-anchor="middle" style="fill:#6A6A6A">32</text></svg>
<svg style="left:230px;top:504px" width="16" height="16" viewBox="0 0 16 16" class="sh"><g transform="translate(0 .6)"><path d="M1.400 6.200H5V4H11V6.200H14.600L13 8.600L14.600 11H9.600V9H6.400V11H1.400L3 8.600z"/><path d="M5 6.200V9H6.400M11 6.200V9H9.600" class="n"/></g></svg>
<svg style="left:246px;top:504px" width="16" height="16" viewBox="0 0 16 16" class="sh"><g transform="translate(0 16) scale(1 -1)"><g transform="translate(0 .6)"><path d="M1.400 6.200H5V4H11V6.200H14.600L13 8.600L14.600 11H9.600V9H6.400V11H1.400L3 8.600z"/><path d="M5 6.200V9H6.400M11 6.200V9H9.600" class="n"/></g></g></svg>
<svg style="left:262px;top:504px" width="16" height="16" viewBox="0 0 16 16" class="sh"><g transform="translate(0 .6)"><path d="M1.400 6.600Q3.200 5.600 5 5.400V3.600Q8 2.600 11 3.600V5.400Q12.800 5.600 14.600 6.600L13 8.800L14.600 11.600Q12 10.400 9.600 10.400V8.400Q8 8 6.400 8.400V10.400Q4 10.400 1.400 11.600L3 8.800z"/><path d="M5 5.400V8.600L6.400 8.400M11 5.400V8.600L9.600 8.400" class="n"/></g></svg>
<svg style="left:278px;top:504px" width="16" height="16" viewBox="0 0 16 16" class="sh"><g transform="translate(0 16) scale(1 -1)"><g transform="translate(0 .6)"><path d="M1.400 6.600Q3.200 5.600 5 5.400V3.600Q8 2.600 11 3.600V5.400Q12.800 5.600 14.600 6.600L13 8.800L14.600 11.600Q12 10.400 9.600 10.400V8.400Q8 8 6.400 8.400V10.400Q4 10.400 1.400 11.600L3 8.800z"/><path d="M5 5.400V8.600L6.400 8.400M11 5.400V8.600L9.600 8.400" class="n"/></g></g></svg>
<svg style="left:294px;top:504px" width="16" height="16" viewBox="0 0 16 16" class="sh"><path d="M4.200 4.400V13Q4.200 14 3.200 14Q2.200 14 2.200 13Q2.200 12 3.200 12H4.200M4.200 4.400V3.400Q4.200 2.200 5.400 2.200H12.800Q14 2.200 14 3.400Q14 4.400 12.800 4.400H12V13Q12 14 11 14H3.200"/><path d="M12.800 4.400H5.400Q6.400 4.400 6.400 3.400Q6.400 2.800 5.600 2.800" class="n"/></svg>
<svg style="left:310px;top:504px" width="16" height="16" viewBox="0 0 16 16" class="sh"><path d="M2 5.200V12.800Q2 14 3.200 14Q4.200 14 4.200 12.800V12H13Q14 12 14 11V3.400Q14 2.200 13 2.200Q12 2.200 12 3.200V4.200H3.200Q2 4.200 2 5.200z"/><path d="M12 4.200H13Q14 4.200 14 3.400M2 5.400Q2 6.400 3.200 6.400Q4.200 6.400 4.200 5.400Q4.200 4.800 3.400 5M4.200 5.400V12" class="n"/></svg>
<svg style="left:326px;top:504px" width="16" height="16" viewBox="0 0 16 16" class="sh"><path d="M2 4.200C4 2.400 6 2.400 8 3.600C10 4.800 12 4.800 14 3.200V11.800C12 13.600 10 13.600 8 12.400C6 11.200 4 11.200 2 12.800z"/></svg>
<svg style="left:342px;top:504px" width="16" height="16" viewBox="0 0 16 16" class="sh"><path d="M2 3.600C3.400 2.400 4.600 2.400 6 3.400C7.400 4.400 8.600 4.400 10 3.400C11.400 2.400 12.600 2.400 14 3.600V12.400C12.600 11.200 11.400 11.200 10 12.200C8.600 13.200 7.400 13.200 6 12.200C4.600 11.200 3.400 11.200 2 12.400z"/></svg>
<div style="left:422px;top:112px;width:13px;height:414.5px;background:#fff;box-shadow:inset 0 0 0 .8px #DCDCDC"></div>
<div style="left:422.5px;top:453px;width:12.500px;height:60px;background:#E6E6E6"></div>
<div style="left:422px;top:112px;width:13px;height:13px;background:#fff;box-shadow:inset 0 0 0 .6px #CFCFCF"></div>
<div style="left:422px;top:513px;width:13px;height:13.5px;background:#fff;box-shadow:inset 0 0 0 .6px #CFCFCF"></div>
<svg style="left:425.5px;top:117px;" width="6" height="3.4" viewBox="0 0 6 3.4"><path d="M0 3.400h6L3 0z" fill="#606060"/></svg>
<svg style="left:425.5px;top:518.4px;" width="6" height="3.4" viewBox="0 0 6 3.4"><path d="M0 0h6L3 3.400z" fill="#606060"/></svg>
<div style="left:432.2px;top:528.6px;width:1.3px;height:1.3px;background:#8A8A8A;"></div>
<div style="left:429px;top:531.8000000000001px;width:1.3px;height:1.3px;background:#8A8A8A;"></div>
<div style="left:432.2px;top:531.8000000000001px;width:1.3px;height:1.3px;background:#8A8A8A;"></div>
</div></body></html>
